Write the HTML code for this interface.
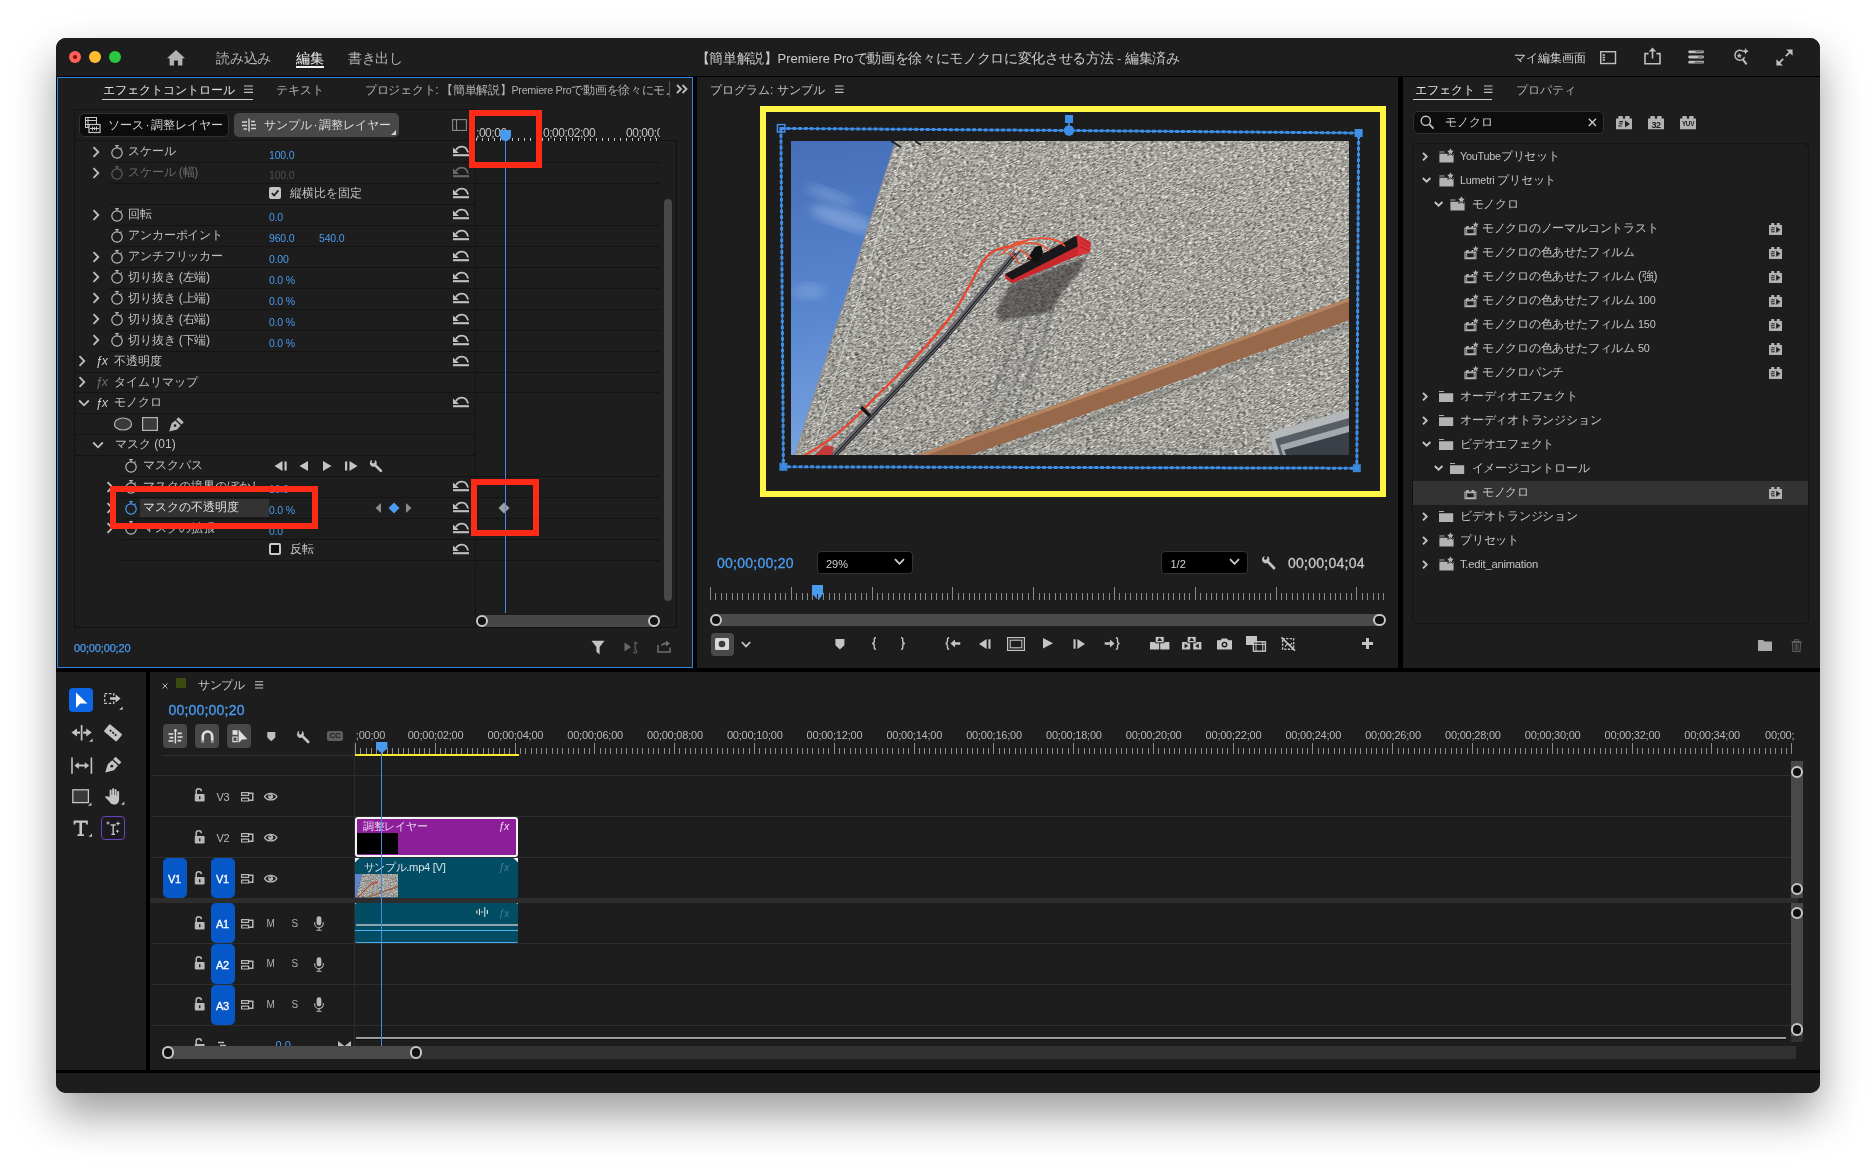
<!DOCTYPE html><html lang="ja"><head><meta charset="utf-8"><title>Premiere Pro</title><style>
*{box-sizing:border-box;margin:0;padding:0}
html,body{width:1876px;height:1167px;overflow:hidden;background:#fff;font-family:"Liberation Sans",sans-serif;font-size:12px;color:#c6c6c6}
#win{position:absolute;left:56px;top:38px;width:1764px;height:1055px;background:#000;border-radius:10px;overflow:hidden}
#shadow{position:absolute;left:56px;top:38px;width:1764px;height:1055px;border-radius:10px;box-shadow:0 22px 44px rgba(0,0,0,.39)}
#pg{position:absolute;left:-56px;top:-38px;width:1876px;height:1167px;will-change:transform}
.a{position:absolute}
.p{position:absolute;background:#1d1d1d}
.t{position:absolute;white-space:nowrap;line-height:16px;height:16px}
svg{position:absolute;overflow:visible}
</style></head><body>
<div id="shadow"></div><div id="win"><div id="pg">
<div class="p" style="left:56px;top:38px;width:1764px;height:38px"></div>
<div class="a" style="left:69px;top:51px;width:12px;height:12px;background:#fe5f57;border-radius:6px"></div>
<div class="a" style="left:89px;top:51px;width:12px;height:12px;background:#febc2e;border-radius:6px"></div>
<div class="a" style="left:109px;top:51px;width:12px;height:12px;background:#28c840;border-radius:6px"></div>
<div class="a" style="left:73px;top:55px;width:4px;height:4px;background:#7a0a05;border-radius:2px"></div>
<svg style="left:167px;top:50px;" width="18" height="16" viewBox="0 0 18 16"><path d="M9 0 L18 8.2 H15.4 V15.5 H11 V10.5 H7 V15.5 H2.6 V8.2 H0z" fill="#b2b2b2"/></svg>
<div class="t " style="left:216px;top:49.5px;font-size:14px;color:#b4b4b4;letter-spacing:-0.2px">読み込み</div>
<div class="t " style="left:296px;top:49.5px;font-size:14px;color:#ececec;">編集</div>
<div class="a" style="left:296px;top:66px;width:28px;height:2px;background:#f0f0f0;"></div>
<div class="t " style="left:348px;top:49.5px;font-size:14px;color:#b4b4b4;letter-spacing:-0.3px">書き出し</div>
<div class="t " style="left:695.5px;top:50.3px;font-size:14px;color:#cacaca;letter-spacing:-0.32px">【簡単解説】<span style="font-size:12.9px;letter-spacing:0">Premiere Pro</span>で動画を徐々にモノクロに変化させる方法<span style="font-size:12.9px;letter-spacing:0"> - </span>編集済み</div>
<div class="t " style="left:1514px;top:49.5px;font-size:12px;color:#d0d0d0;">マイ編集画面</div>
<div class="p" style="left:57px;top:77px;width:636px;height:591px;border:1px solid #2f86e3"></div>
<div class="p" style="left:697px;top:77px;width:701px;height:591px"></div>
<div class="p" style="left:1403px;top:77px;width:417px;height:591px"></div>
<div class="p" style="left:56px;top:672px;width:90px;height:398px"></div>
<div class="p" style="left:150px;top:672px;width:1670px;height:398px"></div>
<div class="p" style="left:56px;top:1073px;width:1764px;height:20px"></div>
<div class="t " style="left:103px;top:81.5px;font-size:12px;color:#e2e2e2;">エフェクトコントロール</div>
<svg style="left:244px;top:85px;" width="10" height="9" viewBox="0 0 10 9"><path d="M0 1H9M0 4.2H9M0 7.4H9" stroke="#c0c0c0" stroke-width="1.1"/></svg>
<div class="a" style="left:102px;top:98.8px;width:151px;height:1.5px;background:#d2d2d2;"></div>
<div class="t " style="left:276px;top:81.5px;font-size:12px;color:#b0b0b0;">テキスト</div>
<div class="t" style="left:365px;top:81.5px;font-size:12px;color:#b0b0b0;width:303.5px;overflow:hidden;letter-spacing:-0.3px">プロジェクト: 【簡単解説】<span style="font-size:10.8px">Premiere Pro</span>で動画を徐々にモノクロに</div>
<div class="a" style="left:669px;top:81px;width:1px;height:16px;background:#555;"></div>
<svg style="left:676px;top:84px;" width="12" height="10" viewBox="0 0 12 10"><path d="M1 1 L5 5 L1 9 M6.5 1 L10.5 5 L6.5 9" fill="none" stroke="#c0c0c0" stroke-width="1.8"/></svg>
<div class="a" style="left:74px;top:109px;width:603px;height:519px;border:1px solid #121212;border-top:none;border-right:none"></div>
<div class="a" style="left:74px;top:109px;width:402px;height:1px;background:#121212;"></div>
<div class="a" style="left:660px;top:140px;width:17px;height:1px;background:#121212;"></div>
<div class="a" style="left:676px;top:140px;width:1px;height:488px;background:#121212;"></div>
<div class="a" style="left:75px;top:140px;width:585px;height:1px;background:#131313;"></div>
<div class="a" style="left:79px;top:113px;width:150px;height:24px;background:#0c0c0c;border:1px solid #303030;border-radius:5px"></div>
<svg style="left:85px;top:117px;" width="16" height="16" viewBox="0 0 16 16"><rect x="0.5" y="0.5" width="11" height="10" fill="none" stroke="#c8c8c8" stroke-width="1"/><path d="M0.5 3.5h11M0.5 7.5h11M3 0.5v10" stroke="#c8c8c8" stroke-width="1"/><rect x="4" y="7.5" width="11" height="8" fill="#0c0c0c" stroke="#c8c8c8" stroke-width="1.2"/><path d="M5 11.5h9M7.5 9.5v4M9.5 10v3M11.5 9.5v4" stroke="#c8c8c8" stroke-width="1"/></svg>
<div class="t " style="left:108px;top:117px;font-size:12px;color:#d0d0d0;">ソース<span style="margin:0 1.6px 0 1.4px">·</span>調整レイヤー</div>
<div class="a" style="left:234px;top:113px;width:165px;height:24px;background:#484848;border-radius:5px"></div>
<svg style="left:242px;top:118px;" width="14" height="14" viewBox="0 0 14 14"><path d="M7 0.5v13" stroke="#d4d4d4" stroke-width="1.4"/><path d="M0 4h5M9 3.5h4M0 7.5h5M9 7h5M1.5 11h3.5M9 10.5h5" stroke="#d4d4d4" stroke-width="1.6"/></svg>
<div class="t " style="left:264px;top:117px;font-size:12px;color:#dadada;">サンプル<span style="margin:0 1.6px 0 1.4px">·</span>調整レイヤー</div>
<svg style="left:391px;top:130px;" width="5" height="5" viewBox="0 0 5 5"><path d="M5 0V5H0z" fill="#d0d0d0"/></svg>
<svg style="left:452px;top:119px;" width="15" height="12" viewBox="0 0 15 12"><rect x="0.6" y="0.6" width="13.8" height="10.8" fill="none" stroke="#8a8a8a" stroke-width="1.1"/><path d="M4.5 0.6v10.8" stroke="#8a8a8a" stroke-width="1.1"/></svg>
<div class="a" style="left:475px;top:110px;width:1px;height:518px;background:#131313;"></div>
<svg style="left:92px;top:145.9px;" width="8" height="12" viewBox="0 0 8 12"><path d="M1.5 1.2 L6.3 6 L1.5 10.8" fill="none" stroke="#c0c0c0" stroke-width="1.8"/></svg>
<svg style="left:109.5px;top:143.9px;" width="14" height="16" viewBox="0 0 14 16"><circle cx="7" cy="9" r="5.2" fill="none" stroke="#b8b8b8" stroke-width="1.2"/><path d="M5.2 1.6h3.6M7 1.6v2.2M10.6 4.6l1-1" stroke="#b8b8b8" stroke-width="1.3" fill="none"/></svg>
<div class="t " style="left:128.4px;top:143.4px;font-size:12px;color:#c2c2c2;letter-spacing:-0.2px">スケール</div>
<div class="t " style="left:269px;top:146.5px;font-size:10.5px;color:#4a9bef;letter-spacing:-0.2px">100.0</div>
<svg style="left:453px;top:145.4px;" width="16" height="12" viewBox="0 0 16 12"><path d="M3 5.2 C5 1.2 12.6 -1.2 15.1 7.4" fill="none" stroke="#c2c2c2" stroke-width="1.8"/><path d="M0 2.4 V8 H5.9z" fill="#c2c2c2"/><path d="M0 10.2 H16" stroke="#c2c2c2" stroke-width="2.1"/></svg>
<div class="a" style="left:109px;top:162px;width:551px;height:1px;background:#131313;"></div>
<svg style="left:92px;top:166.8px;" width="8" height="12" viewBox="0 0 8 12"><path d="M1.5 1.2 L6.3 6 L1.5 10.8" fill="none" stroke="#c0c0c0" stroke-width="1.8"/></svg>
<svg style="left:109.5px;top:164.8px;" width="14" height="16" viewBox="0 0 14 16"><circle cx="7" cy="9" r="5.2" fill="none" stroke="#5e5e5e" stroke-width="1.2"/><path d="M5.2 1.6h3.6M7 1.6v2.2M10.6 4.6l1-1" stroke="#5e5e5e" stroke-width="1.3" fill="none"/></svg>
<div class="t " style="left:128.4px;top:164.3px;font-size:12px;color:#6a6a6a;letter-spacing:-0.2px">スケール (幅)</div>
<div class="t " style="left:269px;top:167.4px;font-size:10.5px;color:#4e4e4e;letter-spacing:-0.2px">100.0</div>
<svg style="left:453px;top:166.3px;" width="16" height="12" viewBox="0 0 16 12"><path d="M3 5.2 C5 1.2 12.6 -1.2 15.1 7.4" fill="none" stroke="#6a6a6a" stroke-width="1.8"/><path d="M0 2.4 V8 H5.9z" fill="#6a6a6a"/><path d="M0 10.2 H16" stroke="#6a6a6a" stroke-width="2.1"/></svg>
<div class="a" style="left:109px;top:183px;width:551px;height:1px;background:#131313;"></div>
<div class="a" style="left:269px;top:187.2px;width:12px;height:12px;background:#c4c4c4;border-radius:2px"></div>
<svg style="left:270px;top:188.2px;" width="10" height="10" viewBox="0 0 10 10"><path d="M1.8 5.2 L4.2 7.6 L8.4 2.4" fill="none" stroke="#1a1a1a" stroke-width="1.7"/></svg>
<div class="t " style="left:290px;top:185.2px;font-size:12px;color:#c2c2c2;">縦横比を固定</div>
<svg style="left:453px;top:187.2px;" width="16" height="12" viewBox="0 0 16 12"><path d="M3 5.2 C5 1.2 12.6 -1.2 15.1 7.4" fill="none" stroke="#c2c2c2" stroke-width="1.8"/><path d="M0 2.4 V8 H5.9z" fill="#c2c2c2"/><path d="M0 10.2 H16" stroke="#c2c2c2" stroke-width="2.1"/></svg>
<div class="a" style="left:109px;top:204px;width:366px;height:1px;background:#131313;"></div>
<svg style="left:92px;top:208.6px;" width="8" height="12" viewBox="0 0 8 12"><path d="M1.5 1.2 L6.3 6 L1.5 10.8" fill="none" stroke="#c0c0c0" stroke-width="1.8"/></svg>
<svg style="left:109.5px;top:206.6px;" width="14" height="16" viewBox="0 0 14 16"><circle cx="7" cy="9" r="5.2" fill="none" stroke="#b8b8b8" stroke-width="1.2"/><path d="M5.2 1.6h3.6M7 1.6v2.2M10.6 4.6l1-1" stroke="#b8b8b8" stroke-width="1.3" fill="none"/></svg>
<div class="t " style="left:128.4px;top:206.1px;font-size:12px;color:#c2c2c2;letter-spacing:-0.2px">回転</div>
<div class="t " style="left:269px;top:209.2px;font-size:10.5px;color:#4a9bef;letter-spacing:-0.2px">0.0</div>
<svg style="left:453px;top:208.1px;" width="16" height="12" viewBox="0 0 16 12"><path d="M3 5.2 C5 1.2 12.6 -1.2 15.1 7.4" fill="none" stroke="#c2c2c2" stroke-width="1.8"/><path d="M0 2.4 V8 H5.9z" fill="#c2c2c2"/><path d="M0 10.2 H16" stroke="#c2c2c2" stroke-width="2.1"/></svg>
<div class="a" style="left:109px;top:225px;width:551px;height:1px;background:#131313;"></div>
<svg style="left:109.5px;top:227.5px;" width="14" height="16" viewBox="0 0 14 16"><circle cx="7" cy="9" r="5.2" fill="none" stroke="#b8b8b8" stroke-width="1.2"/><path d="M5.2 1.6h3.6M7 1.6v2.2M10.6 4.6l1-1" stroke="#b8b8b8" stroke-width="1.3" fill="none"/></svg>
<div class="t " style="left:128.4px;top:227.0px;font-size:12px;color:#c2c2c2;letter-spacing:-0.2px">アンカーポイント</div>
<div class="t " style="left:269px;top:230.1px;font-size:10.5px;color:#4a9bef;letter-spacing:-0.2px">960.0</div>
<div class="t " style="left:319px;top:230.1px;font-size:10.5px;color:#4a9bef;letter-spacing:-0.2px">540.0</div>
<svg style="left:453px;top:229.0px;" width="16" height="12" viewBox="0 0 16 12"><path d="M3 5.2 C5 1.2 12.6 -1.2 15.1 7.4" fill="none" stroke="#c2c2c2" stroke-width="1.8"/><path d="M0 2.4 V8 H5.9z" fill="#c2c2c2"/><path d="M0 10.2 H16" stroke="#c2c2c2" stroke-width="2.1"/></svg>
<div class="a" style="left:109px;top:246px;width:551px;height:1px;background:#131313;"></div>
<svg style="left:92px;top:250.5px;" width="8" height="12" viewBox="0 0 8 12"><path d="M1.5 1.2 L6.3 6 L1.5 10.8" fill="none" stroke="#c0c0c0" stroke-width="1.8"/></svg>
<svg style="left:109.5px;top:248.5px;" width="14" height="16" viewBox="0 0 14 16"><circle cx="7" cy="9" r="5.2" fill="none" stroke="#b8b8b8" stroke-width="1.2"/><path d="M5.2 1.6h3.6M7 1.6v2.2M10.6 4.6l1-1" stroke="#b8b8b8" stroke-width="1.3" fill="none"/></svg>
<div class="t " style="left:128.4px;top:248.0px;font-size:12px;color:#c2c2c2;letter-spacing:-0.2px">アンチフリッカー</div>
<div class="t " style="left:269px;top:251.10000000000002px;font-size:10.5px;color:#4a9bef;letter-spacing:-0.2px">0.00</div>
<svg style="left:453px;top:250.0px;" width="16" height="12" viewBox="0 0 16 12"><path d="M3 5.2 C5 1.2 12.6 -1.2 15.1 7.4" fill="none" stroke="#c2c2c2" stroke-width="1.8"/><path d="M0 2.4 V8 H5.9z" fill="#c2c2c2"/><path d="M0 10.2 H16" stroke="#c2c2c2" stroke-width="2.1"/></svg>
<div class="a" style="left:109px;top:267px;width:551px;height:1px;background:#131313;"></div>
<svg style="left:92px;top:271.4px;" width="8" height="12" viewBox="0 0 8 12"><path d="M1.5 1.2 L6.3 6 L1.5 10.8" fill="none" stroke="#c0c0c0" stroke-width="1.8"/></svg>
<svg style="left:109.5px;top:269.4px;" width="14" height="16" viewBox="0 0 14 16"><circle cx="7" cy="9" r="5.2" fill="none" stroke="#b8b8b8" stroke-width="1.2"/><path d="M5.2 1.6h3.6M7 1.6v2.2M10.6 4.6l1-1" stroke="#b8b8b8" stroke-width="1.3" fill="none"/></svg>
<div class="t " style="left:128.4px;top:268.9px;font-size:12px;color:#c2c2c2;letter-spacing:-0.2px">切り抜き (左端)</div>
<div class="t " style="left:269px;top:272.0px;font-size:10.5px;color:#4a9bef;letter-spacing:-0.2px">0.0 %</div>
<svg style="left:453px;top:270.9px;" width="16" height="12" viewBox="0 0 16 12"><path d="M3 5.2 C5 1.2 12.6 -1.2 15.1 7.4" fill="none" stroke="#c2c2c2" stroke-width="1.8"/><path d="M0 2.4 V8 H5.9z" fill="#c2c2c2"/><path d="M0 10.2 H16" stroke="#c2c2c2" stroke-width="2.1"/></svg>
<div class="a" style="left:109px;top:288px;width:551px;height:1px;background:#131313;"></div>
<svg style="left:92px;top:292.3px;" width="8" height="12" viewBox="0 0 8 12"><path d="M1.5 1.2 L6.3 6 L1.5 10.8" fill="none" stroke="#c0c0c0" stroke-width="1.8"/></svg>
<svg style="left:109.5px;top:290.3px;" width="14" height="16" viewBox="0 0 14 16"><circle cx="7" cy="9" r="5.2" fill="none" stroke="#b8b8b8" stroke-width="1.2"/><path d="M5.2 1.6h3.6M7 1.6v2.2M10.6 4.6l1-1" stroke="#b8b8b8" stroke-width="1.3" fill="none"/></svg>
<div class="t " style="left:128.4px;top:289.8px;font-size:12px;color:#c2c2c2;letter-spacing:-0.2px">切り抜き (上端)</div>
<div class="t " style="left:269px;top:292.90000000000003px;font-size:10.5px;color:#4a9bef;letter-spacing:-0.2px">0.0 %</div>
<svg style="left:453px;top:291.8px;" width="16" height="12" viewBox="0 0 16 12"><path d="M3 5.2 C5 1.2 12.6 -1.2 15.1 7.4" fill="none" stroke="#c2c2c2" stroke-width="1.8"/><path d="M0 2.4 V8 H5.9z" fill="#c2c2c2"/><path d="M0 10.2 H16" stroke="#c2c2c2" stroke-width="2.1"/></svg>
<div class="a" style="left:109px;top:309px;width:551px;height:1px;background:#131313;"></div>
<svg style="left:92px;top:313.2px;" width="8" height="12" viewBox="0 0 8 12"><path d="M1.5 1.2 L6.3 6 L1.5 10.8" fill="none" stroke="#c0c0c0" stroke-width="1.8"/></svg>
<svg style="left:109.5px;top:311.2px;" width="14" height="16" viewBox="0 0 14 16"><circle cx="7" cy="9" r="5.2" fill="none" stroke="#b8b8b8" stroke-width="1.2"/><path d="M5.2 1.6h3.6M7 1.6v2.2M10.6 4.6l1-1" stroke="#b8b8b8" stroke-width="1.3" fill="none"/></svg>
<div class="t " style="left:128.4px;top:310.7px;font-size:12px;color:#c2c2c2;letter-spacing:-0.2px">切り抜き (右端)</div>
<div class="t " style="left:269px;top:313.8px;font-size:10.5px;color:#4a9bef;letter-spacing:-0.2px">0.0 %</div>
<svg style="left:453px;top:312.7px;" width="16" height="12" viewBox="0 0 16 12"><path d="M3 5.2 C5 1.2 12.6 -1.2 15.1 7.4" fill="none" stroke="#c2c2c2" stroke-width="1.8"/><path d="M0 2.4 V8 H5.9z" fill="#c2c2c2"/><path d="M0 10.2 H16" stroke="#c2c2c2" stroke-width="2.1"/></svg>
<div class="a" style="left:109px;top:330px;width:551px;height:1px;background:#131313;"></div>
<svg style="left:92px;top:334.1px;" width="8" height="12" viewBox="0 0 8 12"><path d="M1.5 1.2 L6.3 6 L1.5 10.8" fill="none" stroke="#c0c0c0" stroke-width="1.8"/></svg>
<svg style="left:109.5px;top:332.1px;" width="14" height="16" viewBox="0 0 14 16"><circle cx="7" cy="9" r="5.2" fill="none" stroke="#b8b8b8" stroke-width="1.2"/><path d="M5.2 1.6h3.6M7 1.6v2.2M10.6 4.6l1-1" stroke="#b8b8b8" stroke-width="1.3" fill="none"/></svg>
<div class="t " style="left:128.4px;top:331.6px;font-size:12px;color:#c2c2c2;letter-spacing:-0.2px">切り抜き (下端)</div>
<div class="t " style="left:269px;top:334.70000000000005px;font-size:10.5px;color:#4a9bef;letter-spacing:-0.2px">0.0 %</div>
<svg style="left:453px;top:333.6px;" width="16" height="12" viewBox="0 0 16 12"><path d="M3 5.2 C5 1.2 12.6 -1.2 15.1 7.4" fill="none" stroke="#c2c2c2" stroke-width="1.8"/><path d="M0 2.4 V8 H5.9z" fill="#c2c2c2"/><path d="M0 10.2 H16" stroke="#c2c2c2" stroke-width="2.1"/></svg>
<div class="a" style="left:109px;top:351px;width:551px;height:1px;background:#131313;"></div>
<svg style="left:78px;top:355.1px;" width="8" height="12" viewBox="0 0 8 12"><path d="M1.5 1.2 L6.3 6 L1.5 10.8" fill="none" stroke="#c0c0c0" stroke-width="1.8"/></svg>
<div class="t " style="left:95.5px;top:353.1px;font-size:12.5px;color:#c8c8c8;font-style:italic;letter-spacing:-0.6px">ƒx</div>
<div class="t " style="left:114px;top:352.6px;font-size:12px;color:#c2c2c2;">不透明度</div>
<svg style="left:453px;top:354.6px;" width="16" height="12" viewBox="0 0 16 12"><path d="M3 5.2 C5 1.2 12.6 -1.2 15.1 7.4" fill="none" stroke="#c0c0c0" stroke-width="1.8"/><path d="M0 2.4 V8 H5.9z" fill="#c0c0c0"/><path d="M0 10.2 H16" stroke="#c0c0c0" stroke-width="2.1"/></svg>
<div class="a" style="left:75px;top:372px;width:585px;height:1px;background:#131313;"></div>
<svg style="left:78px;top:376.0px;" width="8" height="12" viewBox="0 0 8 12"><path d="M1.5 1.2 L6.3 6 L1.5 10.8" fill="none" stroke="#c0c0c0" stroke-width="1.8"/></svg>
<div class="t " style="left:95.5px;top:374.0px;font-size:12.5px;color:#6c6c6c;font-style:italic;letter-spacing:-0.6px">ƒx</div>
<div class="t " style="left:114px;top:373.5px;font-size:12px;color:#c2c2c2;">タイムリマップ</div>
<div class="a" style="left:75px;top:392px;width:585px;height:1px;background:#131313;"></div>
<svg style="left:78px;top:398.9px;" width="12" height="8" viewBox="0 0 12 8"><path d="M1.2 1.5 L6 6.3 L10.8 1.5" fill="none" stroke="#c0c0c0" stroke-width="1.8"/></svg>
<div class="t " style="left:95.5px;top:394.9px;font-size:12.5px;color:#c8c8c8;font-style:italic;letter-spacing:-0.6px">ƒx</div>
<div class="t " style="left:114px;top:394.4px;font-size:12px;color:#c2c2c2;">モノクロ</div>
<svg style="left:453px;top:396.4px;" width="16" height="12" viewBox="0 0 16 12"><path d="M3 5.2 C5 1.2 12.6 -1.2 15.1 7.4" fill="none" stroke="#c0c0c0" stroke-width="1.8"/><path d="M0 2.4 V8 H5.9z" fill="#c0c0c0"/><path d="M0 10.2 H16" stroke="#c0c0c0" stroke-width="2.1"/></svg>
<div class="a" style="left:75px;top:413px;width:400px;height:1px;background:#131313;"></div>
<svg style="left:113px;top:416.8px;" width="20" height="14" viewBox="0 0 20 14"><ellipse cx="10" cy="7" rx="8.6" ry="6" fill="#3a3a3a" stroke="#b4b4b4" stroke-width="1.2"/></svg>
<svg style="left:142px;top:416.8px;" width="16" height="14" viewBox="0 0 16 14"><rect x="0.6" y="0.6" width="14.8" height="12.8" fill="#3a3a3a" stroke="#b4b4b4" stroke-width="1.2"/></svg>
<svg style="left:168px;top:415.8px;" width="17" height="16" viewBox="0 0 17 16"><path d="M10.5 1.2 L15.8 6.2 L13.6 8.4 L8.2 3.4z M7.4 4.4 L12.6 9.4 L9.2 13.4 L1.2 15.4 L3.6 7.6z" fill="#b8b8b8"/><circle cx="7" cy="9.6" r="1.3" fill="#1d1d1d"/></svg>
<div class="a" style="left:75px;top:434px;width:400px;height:1px;background:#131313;"></div>
<svg style="left:92px;top:440.7px;" width="12" height="8" viewBox="0 0 12 8"><path d="M1.2 1.5 L6 6.3 L10.8 1.5" fill="none" stroke="#c0c0c0" stroke-width="1.8"/></svg>
<div class="t " style="left:115px;top:436.2px;font-size:12px;color:#c2c2c2;">マスク (01)</div>
<div class="a" style="left:75px;top:455px;width:400px;height:1px;background:#131313;"></div>
<svg style="left:123.5px;top:457.7px;" width="14" height="16" viewBox="0 0 14 16"><circle cx="7" cy="9" r="5.2" fill="none" stroke="#b8b8b8" stroke-width="1.2"/><path d="M5.2 1.6h3.6M7 1.6v2.2M10.6 4.6l1-1" stroke="#b8b8b8" stroke-width="1.3" fill="none"/></svg>
<div class="t " style="left:143px;top:457.2px;font-size:12px;color:#c2c2c2;">マスクパス</div>
<svg style="left:274px;top:460.7px;" width="14" height="10" viewBox="0 0 14 10"><path d="M8.5 0 V10 L0.5 5z" fill="#c4c4c4"/><path d="M10.5 0.5h2.2v9h-2.2z" fill="#c4c4c4"/></svg>
<svg style="left:299px;top:460.7px;" width="9" height="10" viewBox="0 0 9 10"><path d="M9 0 V10 L0.5 5z" fill="#c4c4c4"/></svg>
<svg style="left:323px;top:460.7px;" width="9" height="10" viewBox="0 0 9 10"><path d="M0 0 V10 L8.5 5z" fill="#c4c4c4"/></svg>
<svg style="left:344px;top:460.7px;" width="14" height="10" viewBox="0 0 14 10"><path d="M1 0.5h2.2v9H1z" fill="#c4c4c4"/><path d="M5.5 0 V10 L13.5 5z" fill="#c4c4c4"/></svg>
<svg style="left:369px;top:458.7px;" width="14" height="14" viewBox="0 0 14 14"><path d="M3.2 0.8 a3.6 3.6 0 0 0 -2 5 a3.6 3.6 0 0 0 4.4 1.6 L11 12.8 a1.3 1.3 0 0 0 1.9 -1.9 L7.4 5.4 a3.6 3.6 0 0 0 -1.6 -4.4 L5.8 3.4 L4 4.6 L2.6 3.6z" fill="#c4c4c4"/></svg>
<div class="a" style="left:122px;top:476px;width:538px;height:1px;background:#131313;"></div>
<svg style="left:106px;top:480.6px;" width="8" height="12" viewBox="0 0 8 12"><path d="M1.5 1.2 L6.3 6 L1.5 10.8" fill="none" stroke="#c0c0c0" stroke-width="1.8"/></svg>
<svg style="left:123.5px;top:478.6px;" width="14" height="16" viewBox="0 0 14 16"><circle cx="7" cy="9" r="5.2" fill="none" stroke="#b8b8b8" stroke-width="1.2"/><path d="M5.2 1.6h3.6M7 1.6v2.2M10.6 4.6l1-1" stroke="#b8b8b8" stroke-width="1.3" fill="none"/></svg>
<div class="t " style="left:143px;top:478.1px;font-size:12px;color:#c2c2c2;">マスクの境界のぼかし</div>
<div class="t " style="left:269px;top:481.20000000000005px;font-size:10.5px;color:#4a9bef;letter-spacing:-0.2px">10.0</div>
<svg style="left:453px;top:480.1px;" width="16" height="12" viewBox="0 0 16 12"><path d="M3 5.2 C5 1.2 12.6 -1.2 15.1 7.4" fill="none" stroke="#c0c0c0" stroke-width="1.8"/><path d="M0 2.4 V8 H5.9z" fill="#c0c0c0"/><path d="M0 10.2 H16" stroke="#c0c0c0" stroke-width="2.1"/></svg>
<div class="a" style="left:122px;top:497px;width:538px;height:1px;background:#131313;"></div>
<svg style="left:106px;top:501.5px;" width="8" height="12" viewBox="0 0 8 12"><path d="M1.5 1.2 L6.3 6 L1.5 10.8" fill="none" stroke="#c0c0c0" stroke-width="1.8"/></svg>
<svg style="left:123.5px;top:499.5px;" width="14" height="16" viewBox="0 0 14 16"><circle cx="7" cy="9" r="5.2" fill="none" stroke="#4a9bef" stroke-width="1.2"/><path d="M5.2 1.6h3.6M7 1.6v2.2M10.6 4.6l1-1" stroke="#4a9bef" stroke-width="1.3" fill="none"/></svg>
<div class="a" style="left:140px;top:498.5px;width:129px;height:18px;background:#333333;"></div>
<div class="t " style="left:143px;top:499.0px;font-size:12px;color:#dedede;">マスクの不透明度</div>
<div class="t " style="left:269px;top:502.1px;font-size:10.5px;color:#4a9bef;letter-spacing:-0.2px">0.0 %</div>
<svg style="left:453px;top:501.0px;" width="16" height="12" viewBox="0 0 16 12"><path d="M3 5.2 C5 1.2 12.6 -1.2 15.1 7.4" fill="none" stroke="#c0c0c0" stroke-width="1.8"/><path d="M0 2.4 V8 H5.9z" fill="#c0c0c0"/><path d="M0 10.2 H16" stroke="#c0c0c0" stroke-width="2.1"/></svg>
<div class="a" style="left:122px;top:518px;width:538px;height:1px;background:#131313;"></div>
<svg style="left:375px;top:502.5px;" width="6" height="10" viewBox="0 0 6 10"><path d="M6 0V10L0.5 5z" fill="#8c8c8c"/></svg>
<svg style="left:388px;top:501.5px;" width="12" height="12" viewBox="0 0 12 12"><path d="M6 0.5 L11.5 6 L6 11.5 L0.5 6z" fill="#4a9bef"/></svg>
<svg style="left:406px;top:502.5px;" width="6" height="10" viewBox="0 0 6 10"><path d="M0 0V10L5.5 5z" fill="#8c8c8c"/></svg>
<svg style="left:498px;top:501.5px;" width="12" height="12" viewBox="0 0 12 12"><path d="M6 0.5 L11.5 6 L6 11.5 L0.5 6z" fill="#a0a0a0"/></svg>
<svg style="left:106px;top:522.4px;" width="8" height="12" viewBox="0 0 8 12"><path d="M1.5 1.2 L6.3 6 L1.5 10.8" fill="none" stroke="#c0c0c0" stroke-width="1.8"/></svg>
<svg style="left:123.5px;top:520.4px;" width="14" height="16" viewBox="0 0 14 16"><circle cx="7" cy="9" r="5.2" fill="none" stroke="#b8b8b8" stroke-width="1.2"/><path d="M5.2 1.6h3.6M7 1.6v2.2M10.6 4.6l1-1" stroke="#b8b8b8" stroke-width="1.3" fill="none"/></svg>
<div class="t " style="left:143px;top:519.9px;font-size:12px;color:#c2c2c2;">マスクの拡張</div>
<div class="t " style="left:269px;top:523.0px;font-size:10.5px;color:#4a9bef;letter-spacing:-0.2px">0.0</div>
<svg style="left:453px;top:521.9px;" width="16" height="12" viewBox="0 0 16 12"><path d="M3 5.2 C5 1.2 12.6 -1.2 15.1 7.4" fill="none" stroke="#c0c0c0" stroke-width="1.8"/><path d="M0 2.4 V8 H5.9z" fill="#c0c0c0"/><path d="M0 10.2 H16" stroke="#c0c0c0" stroke-width="2.1"/></svg>
<div class="a" style="left:122px;top:539px;width:538px;height:1px;background:#131313;"></div>
<div class="a" style="left:269px;top:543.3px;width:12px;height:12px;border:2px solid #c8c8c8;border-radius:2px;background:#0c0c0c"></div>
<div class="t " style="left:290px;top:540.8px;font-size:12px;color:#c2c2c2;">反転</div>
<svg style="left:453px;top:542.8px;" width="16" height="12" viewBox="0 0 16 12"><path d="M3 5.2 C5 1.2 12.6 -1.2 15.1 7.4" fill="none" stroke="#c0c0c0" stroke-width="1.8"/><path d="M0 2.4 V8 H5.9z" fill="#c0c0c0"/><path d="M0 10.2 H16" stroke="#c0c0c0" stroke-width="2.1"/></svg>
<div class="a" style="left:122px;top:560px;width:538px;height:1px;background:#131313;"></div>
<div class="t " style="left:476px;top:124.80000000000001px;font-size:12px;color:#c4c4c4;letter-spacing:-0.45px">;00;00</div>
<div class="t " style="left:543px;top:124.80000000000001px;font-size:12px;color:#c4c4c4;letter-spacing:-0.45px">0;00;02;00</div>
<div class="t " style="left:626px;top:124.80000000000001px;font-size:12px;color:#c4c4c4;letter-spacing:-0.45px;width:34px;overflow:hidden">00;00;0</div>
<div class="a" style="left:475.5px;top:138px;width:184.5px;height:3px;background:repeating-linear-gradient(90deg,#c8c8c8 0 1.2px,transparent 1.2px 6px)"></div>
<div class="a" style="left:505px;top:139px;width:1.3px;height:474px;background:#3f8ee6;"></div>
<svg style="left:500px;top:130px;" width="11" height="11" viewBox="0 0 11 11"><path d="M0 0 H11 V5.5 A5.5 5.5 0 0 1 0 5.5z" fill="#4a9bef"/></svg>
<div class="a" style="left:664px;top:198.7px;width:8px;height:402px;background:#484848;border-radius:4px"></div>
<div class="a" style="left:476px;top:615px;width:184px;height:12px;background:#474747;border-radius:6px"></div>
<div class="a" style="left:476px;top:615px;width:12px;height:12px;border-radius:6px;border:2px solid #c6c6c6;background:#121212"></div>
<div class="a" style="left:648px;top:615px;width:12px;height:12px;border-radius:6px;border:2px solid #c6c6c6;background:#121212"></div>
<div class="t " style="left:74px;top:640px;font-size:11px;color:#4a9bef;letter-spacing:-0.15px;-webkit-text-stroke:0.25px #4a9bef">00;00;00;20</div>
<svg style="left:591px;top:640px;" width="14" height="15" viewBox="0 0 14 15"><path d="M0.5 0.8 H13.5 L8.6 7 V14.5 L5.4 11.8 V7z" fill="#c4c4c4"/></svg>
<svg style="left:624px;top:641px;" width="15" height="12" viewBox="0 0 15 12"><path d="M0.5 1.5 V10.5 L7 6z" fill="#666"/><path d="M9.5 10.5 a1.6 1.6 0 1 0 1.6-1.6 V1.2 l2.6 1.2" fill="none" stroke="#666" stroke-width="1.1"/></svg>
<svg style="left:657px;top:641px;" width="14" height="12" viewBox="0 0 14 12"><path d="M1 4 V11 H13 V6.5" fill="none" stroke="#6e6e6e" stroke-width="1.5"/><path d="M4 5.5 c0-3 2.5-4 5-4 V-0.6 L13 2.6 L9 5.6 V3.6 c-2 0-3.6 0.4-5 1.9z" fill="#6e6e6e"/></svg>
<div class="a" style="left:469px;top:110px;width:73px;height:58px;border:6px solid #fd2a18"></div>
<div class="a" style="left:110px;top:486px;width:208px;height:43px;border:6px solid #fd2a18"></div>
<div class="a" style="left:471px;top:479px;width:68px;height:57px;border:6px solid #fd2a18"></div>
<div class="t " style="left:710px;top:81.5px;font-size:12px;color:#c2c2c2;">プログラム: サンプル</div>
<svg style="left:835px;top:85px;" width="10" height="9" viewBox="0 0 10 9"><path d="M0 1H8.5M0 4.2H8.5M0 7.4H8.5" stroke="#c0c0c0" stroke-width="1.1"/></svg>
<div class="a" style="left:759.7px;top:106px;width:626px;height:390.5px;border:6.5px solid #fff545"></div>
<svg style="left:791px;top:141px;" width="558" height="314" viewBox="0 0 558 314">
<defs>
<linearGradient id="sky" x1="0" y1="0" x2="0.25" y2="1"><stop offset="0" stop-color="#456fb8"/><stop offset="0.55" stop-color="#5a88d0"/><stop offset="1" stop-color="#7ca6e2"/></linearGradient>
<linearGradient id="wall" x1="0" y1="1" x2="1" y2="0"><stop offset="0" stop-color="#969590"/><stop offset="0.5" stop-color="#9f9e99"/><stop offset="1" stop-color="#a6a5a0"/></linearGradient>
<filter id="stucco" x="0" y="0" width="100%" height="100%" color-interpolation-filters="sRGB">
<feTurbulence type="fractalNoise" baseFrequency="0.3 1.15" numOctaves="3" seed="11" result="t"/>
<feColorMatrix in="t" type="matrix" values="1.3 0 0 0 -0.15  1.3 0 0 0 -0.15  1.3 0 0 0 -0.15  0 0 0 0 1" result="n"/>
<feComposite in="SourceGraphic" in2="n" operator="arithmetic" k1="0" k2="1" k3="0.86" k4="-0.42" result="c"/>
<feComposite in="c" in2="SourceGraphic" operator="in"/>
</filter>
<filter id="bl"><feGaussianBlur stdDeviation="1.6"/></filter>
<filter id="bl2"><feGaussianBlur stdDeviation="5"/></filter>
<clipPath id="cp"><rect x="0" y="0" width="558" height="314"/></clipPath>
<clipPath id="wallcp"><path d="M104.7 0 H558 V314 H3.9z"/></clipPath>
</defs>
<g clip-path="url(#cp)">
<rect width="558" height="314" fill="url(#sky)"/>
<ellipse cx="52" cy="78" rx="34" ry="9" fill="#a9c4ec" opacity="0.45" filter="url(#bl2)" transform="rotate(18 52 78)"/>
<ellipse cx="40" cy="55" rx="26" ry="6" fill="#a9c4ec" opacity="0.35" filter="url(#bl2)" transform="rotate(20 40 55)"/>
<ellipse cx="18" cy="150" rx="16" ry="8" fill="#a9c4ec" opacity="0.3" filter="url(#bl2)"/>
<g clip-path="url(#wallcp)">
<rect x="-90" y="-160" width="740" height="640" fill="url(#wall)" filter="url(#stucco)" transform="rotate(-24 279 157)"/>
<path d="M219.6 143 L294.9 115.5 L290.1 129.2 L269.3 153.2 L259.6 170.9 L208.4 180.5 L205.2 169.3z" fill="#343331" opacity="0.6" filter="url(#bl)"/>
<path d="M240 160 L222 205 L176 314 M254 156 L238 205 L192 314 M266 152 L252 200 L214 300" stroke="#4a4947" stroke-width="2" fill="none" opacity="0.6" filter="url(#bl)"/>
<path d="M189 318 L558 184.5" stroke="#6e6d69" stroke-width="4" opacity="0.45" filter="url(#bl)"/>
</g>
<path d="M115.3 0 L20.4 314" stroke="#d2d2cc" stroke-width="1" opacity="0.85"/>
<path d="M104.7 0 L3.9 314" stroke="#8f8e89" stroke-width="1.2" opacity="0.7"/>
<path d="M126.7 314 L558 157 V179.3 L179.6 314z" fill="#98684a"/>
<path d="M126.7 314 L558 157 V160.5 L136 314z" fill="#b58561"/>
<path d="M477.6 292 L558 268.5 V314 H484z" fill="#b4b8bb"/>
<path d="M484 298 L558 277 V314 H489z" fill="#585e66"/>
<path d="M489 304 L558 284.5 V314 H492z" fill="#a4a9ae"/>
<path d="M493 309 L558 291 V314 H495z" fill="#3a4048"/>
<path d="M41.5 316 L154 196.5 L227.6 108.4" stroke="#2a2a2e" stroke-width="5.6" fill="none" stroke-linejoin="round"/>
<path d="M40.4 314.8 L152.9 195.3 L226.5 107.2" stroke="#6a6a72" stroke-width="2" fill="none"/>
<path d="M42.6 316.6 L155 197.4 L228.6 109.4" stroke="#8e8e96" stroke-width="0.8" fill="none"/>
<path d="M24 314 l10 -10 l9 2 l-2 8z" fill="#c23a3a"/>
<path d="M11 316 C40 300 58 284 72 269 C92 248 106 236 121 220 C140 200 153 186 165 168 C178 148 186 128 194 118 C200 110 210 106 221.2 105.2" stroke="#ea452f" stroke-width="2.3" fill="none"/>
<path d="M70 266 l9 9" stroke="#151515" stroke-width="3.4"/>
<path d="M176 152 l3 3" stroke="#e6e6ea" stroke-width="2"/>
<path d="M214 133.2 L285.3 94.7 L286.9 93.9 L299.7 101.1 L298.9 111.6 L286.9 114.8 L221.2 142.4 L214 137z" fill="#c9282c"/>
<path d="M214 133.2 L285.3 94.7 L286.9 105.2 L221.2 138.8z" fill="#19191b"/>
<path d="M286.9 93.9 L299.7 101.1 L298.9 111.6 L286.9 114.8z" fill="#d8343a"/>
<path d="M289 97 L298 102.6 M289 101 L298.5 106.4 M289 105.5 L298.5 110" stroke="#a81e22" stroke-width="0.9"/>
<path d="M236 118 L244 106 L250 104 L252 112 L246 122z" fill="#111"/>
<path d="M221.2 106.8 C230 97 262 92 274.1 105.2" stroke="#f4502c" stroke-width="1.7" fill="none"/>
<path d="M211.6 113.2 C216 106 224 102 230.8 100.3" stroke="#f4502c" stroke-width="1.7" fill="none"/>
<path d="M226 104 C238 100 252 102 258 110 M222 108 C230 108 236 112 240 118 M218 112 C222 114 226 118 228 123" stroke="#f4502c" stroke-width="1.5" fill="none"/>
<path d="M224 111.5 L229 106.5" stroke="#c8c8cc" stroke-width="2.6"/>
<path d="M100 0 l10 6 M124 0 l6 4" stroke="#222" stroke-width="2"/>
<circle cx="104" cy="14" r="1.8" fill="#ddd"/>
</g>
</svg>
<svg style="left:0px;top:0px;" width="1876" height="1167" viewBox="0 0 1876 1167"><path d="M780.9 128.4 L1069 130.5 L1358.6 133 L1356.8 468.2 L783.4 466.8z" fill="none" stroke="#3f8fe8" stroke-width="1.3"/><path d="M780.9 128.4 L1069 130.5 L1358.6 133 L1356.8 468.2 L783.4 466.8z" fill="none" stroke="#3f8fe8" stroke-width="3" stroke-dasharray="3.6 2.2"/>
<path d="M1069 130 V121" stroke="#3f8fe8" stroke-width="1.5"/>
<rect x="1065" y="115" width="8" height="8" fill="#3f8fe8"/>
<circle cx="1069" cy="130.5" r="5.2" fill="#3f8fe8"/>
<rect x="777.4" y="124.6" width="7.4" height="7.4" fill="none" stroke="#3f8fe8" stroke-width="1.5"/>
<rect x="1354.6" y="129" width="8" height="8" fill="#3f8fe8"/>
<rect x="1352.8" y="464.2" width="8" height="8" fill="#3f8fe8" opacity="0.9"/>
<rect x="779.4" y="462.8" width="8" height="8" fill="#3f8fe8" opacity="0.9"/></svg>
<div class="t " style="left:717px;top:554.5px;font-size:14px;color:#4a9bef;letter-spacing:0.25px;-webkit-text-stroke:0.35px #4a9bef">00;00;00;20</div>
<div class="a" style="left:817px;top:550.5px;width:95.5px;height:23px;background:#000;border:1px solid #343434;border-radius:4px"></div>
<div class="t " style="left:826px;top:555.5px;font-size:11px;color:#d0d0d0;">29%</div>
<svg style="left:894px;top:558px;" width="11" height="8" viewBox="0 0 11 8"><path d="M1 1.2 L5.5 5.8 L10 1.2" fill="none" stroke="#d4d4d4" stroke-width="1.7"/></svg>
<div class="a" style="left:1161px;top:551px;width:86.5px;height:22.5px;background:#000;border:1px solid #343434;border-radius:4px"></div>
<div class="t " style="left:1170.5px;top:555.5px;font-size:11px;color:#d0d0d0;">1/2</div>
<svg style="left:1229px;top:558px;" width="11" height="8" viewBox="0 0 11 8"><path d="M1 1.2 L5.5 5.8 L10 1.2" fill="none" stroke="#d4d4d4" stroke-width="1.7"/></svg>
<svg style="left:1261px;top:555px;" width="15" height="15" viewBox="0 0 15 15"><path d="M3.6 0.9 a3.9 3.9 0 0 0 -2.2 5.4 a3.9 3.9 0 0 0 4.8 1.8 L12 13.9 a1.4 1.4 0 0 0 2 -2 L8.1 5.9 a3.9 3.9 0 0 0 -1.8 -4.8 L6.3 3.7 L4.4 5 L2.9 3.9z" fill="#c4c4c4"/></svg>
<div class="t " style="left:1288px;top:554.5px;font-size:14px;color:#c8c8c8;letter-spacing:0.25px;-webkit-text-stroke:0.3px #c8c8c8">00;00;04;04</div>
<div class="a" style="left:710px;top:593px;width:675px;height:6.5px;background:repeating-linear-gradient(90deg,#8a8a8a 0 1px,transparent 1px 5.387px)"></div>
<div class="a" style="left:710px;top:587px;width:675px;height:6.5px;background:repeating-linear-gradient(90deg,#8a8a8a 0 1px,transparent 1px 80.8px)"></div>
<svg style="left:812px;top:585px;" width="12" height="15" viewBox="0 0 12 15"><path d="M0 0 H11 V8.5 L7.5 14 H4.8 L0 8.5z" fill="#4a9bef"/><path d="M5.5 9v5" stroke="#1d1d1d" stroke-width="1"/></svg>
<div class="a" style="left:710px;top:613.5px;width:675px;height:12.5px;background:#4a4a4a;border-radius:6px"></div>
<div class="a" style="left:709.8px;top:613.5px;width:12.4px;height:12.4px;border-radius:6.2px;border:2px solid #c6c6c6;background:#101010"></div>
<div class="a" style="left:1373.3px;top:613.5px;width:12.4px;height:12.4px;border-radius:6.2px;border:2px solid #c6c6c6;background:#101010"></div>
<div class="a" style="left:710.5px;top:632.5px;width:23.5px;height:23.5px;background:#4a4a4a;border-radius:4px"></div>
<svg style="left:715px;top:638px;" width="14" height="12" viewBox="0 0 14 12"><rect x="0" y="0" width="14" height="12" rx="1.5" fill="#d8d8d8"/><circle cx="7" cy="6" r="3.3" fill="#3a3a3a"/></svg>
<svg style="left:741px;top:640.5px;" width="10" height="7" viewBox="0 0 10 7"><path d="M0.8 1 L5 5.4 L9.2 1" fill="none" stroke="#c8c8c8" stroke-width="1.7"/></svg>
<svg style="left:834.5px;top:639px;" width="10" height="11" viewBox="0 0 10 11"><path d="M0.4 0 H9.4 V6.2 L4.9 10.4 L0.4 6.2z" fill="#c4c4c4"/></svg>
<svg style="left:870.5px;top:637px;" width="6" height="13" viewBox="0 0 6 13"><path d="M5 0.7 C2.8 0.7 3.3 2.6 3.3 4.2 C3.3 5.6 2.6 6.3 1.2 6.5 C2.6 6.7 3.3 7.4 3.3 8.8 C3.3 10.4 2.8 12.3 5 12.3" fill="none" stroke="#c4c4c4" stroke-width="1.4"/></svg>
<svg style="left:899.5px;top:637px;" width="6" height="13" viewBox="0 0 6 13"><path d="M1 0.7 C3.2 0.7 2.7 2.6 2.7 4.2 C2.7 5.6 3.4 6.3 4.8 6.5 C3.4 6.7 2.7 7.4 2.7 8.8 C2.7 10.4 3.2 12.3 1 12.3" fill="none" stroke="#c4c4c4" stroke-width="1.4"/></svg>
<svg style="left:945px;top:637px;" width="16" height="13" viewBox="0 0 16 13"><path d="M4.2 0.7 C2 0.7 2.5 2.6 2.5 4.2 C2.5 5.6 1.8 6.3 0.6 6.5 C1.8 6.7 2.5 7.4 2.5 8.8 C2.5 10.4 2 12.3 4.2 12.3" fill="none" stroke="#c4c4c4" stroke-width="1.4"/><path d="M5.5 6.5 L10 2.6 V5.3 H15.3 V7.7 H10 V10.4z" fill="#c4c4c4"/></svg>
<svg style="left:978.5px;top:638.5px;" width="12" height="10" viewBox="0 0 12 10"><path d="M7.6 0 V10 L0 5z" fill="#c4c4c4"/><path d="M9.4 0.3h2.1v9.4H9.4z" fill="#c4c4c4"/></svg>
<svg style="left:1007px;top:637px;" width="18" height="14" viewBox="0 0 18 14"><rect x="0.6" y="0.6" width="16.8" height="12.8" fill="none" stroke="#c4c4c4" stroke-width="1.2"/><rect x="3.2" y="3.2" width="11.6" height="7.6" fill="none" stroke="#c4c4c4" stroke-width="1.1"/></svg>
<svg style="left:1042.5px;top:638.3px;" width="10" height="10.4" viewBox="0 0 10 10.4"><path d="M0 0 V10.4 L10 5.2z" fill="#c4c4c4"/></svg>
<svg style="left:1073px;top:638.5px;" width="12" height="10" viewBox="0 0 12 10"><path d="M0.5 0.3h2.1v9.4H0.5z" fill="#c4c4c4"/><path d="M4.4 0 V10 L12 5z" fill="#c4c4c4"/></svg>
<svg style="left:1104px;top:637px;" width="16" height="13" viewBox="0 0 16 13"><path d="M11.8 0.7 C14 0.7 13.5 2.6 13.5 4.2 C13.5 5.6 14.2 6.3 15.4 6.5 C14.2 6.7 13.5 7.4 13.5 8.8 C13.5 10.4 14 12.3 11.8 12.3" fill="none" stroke="#c4c4c4" stroke-width="1.4"/><path d="M10.5 6.5 L6 2.6 V5.3 H0.7 V7.7 H6 V10.4z" fill="#c4c4c4"/></svg>
<svg style="left:1149.8px;top:636px;" width="19.4" height="14" viewBox="0 0 19.4 14"><path d="M0 6h9.2v7.6H0z M10.2 6h9.2v7.6h-9.2z" fill="#c4c4c4"/><path d="M5.2 0.4h9v6.4h-9z" fill="#c4c4c4" stroke="#1d1d1d" stroke-width="0.9"/><path d="M9.7 1.6 l2.5 3.4h-5z" fill="#1d1d1d"/></svg>
<svg style="left:1182px;top:636px;" width="19.4" height="14" viewBox="0 0 19.4 14"><path d="M0 6h8.2v7.6H0z M11.2 6h8.2v7.6h-8.2z" fill="#c4c4c4"/><path d="M2.6 7.6 L6.2 9.9 L2.6 12.2z M16.8 7.6 L13.2 9.9 L16.8 12.2z" fill="#1d1d1d"/><path d="M5.2 0.4h9v6.4h-9z" fill="#c4c4c4" stroke="#1d1d1d" stroke-width="0.9"/><path d="M9.7 1.6 l2.5 3.4h-5z" fill="#1d1d1d"/></svg>
<svg style="left:1216.5px;top:638px;" width="15" height="12" viewBox="0 0 15 12"><path d="M0 2.2 H3.6 L5 0.4 H10 L11.4 2.2 H15 V11.6 H0z" fill="#c4c4c4"/><circle cx="7.5" cy="6.6" r="2.9" fill="#1d1d1d"/><circle cx="7.5" cy="6.6" r="1.5" fill="#c4c4c4"/></svg>
<svg style="left:1245.5px;top:636px;" width="20" height="16" viewBox="0 0 20 16"><rect x="0" y="0" width="11" height="9" fill="#c4c4c4"/><rect x="7.4" y="5.8" width="12" height="9.4" fill="#1d1d1d" stroke="#c4c4c4" stroke-width="1.4"/><path d="M7.4 8.4h12M10 5.8v9.4M16.8 5.8v9.4" stroke="#c4c4c4" stroke-width="1"/></svg>
<svg style="left:1281px;top:637px;" width="15" height="14" viewBox="0 0 15 14"><rect x="1.6" y="1.6" width="11" height="10.6" fill="none" stroke="#c4c4c4" stroke-width="1.4" stroke-dasharray="2.2 1.4"/><path d="M0.4 0.4 L14 13.6" stroke="#c4c4c4" stroke-width="1.6"/><path d="M4 9.5l3-3 2 2 2-2.4" stroke="#c4c4c4" stroke-width="1.1" fill="none"/></svg>
<svg style="left:1361.8px;top:638.2px;" width="11" height="11" viewBox="0 0 11 11"><path d="M5.5 0V11M0 5.5H11" stroke="#c4c4c4" stroke-width="3"/></svg>
<svg style="left:1600px;top:51px;" width="16" height="13" viewBox="0 0 16 13"><rect x="0.7" y="0.7" width="14.8" height="11.8" fill="none" stroke="#c0c0c0" stroke-width="1.4"/><path d="M2.6 3.2h2.4v1.6H2.6zM2.6 5.7h2.4v1.6H2.6zM2.6 8.2h2.4v1.6H2.6z" fill="#c0c0c0"/></svg>
<svg style="left:1644px;top:47px;" width="17" height="18" viewBox="0 0 17 18"><path d="M4.6 6.6H1V16.8H16V6.6H12.4" fill="none" stroke="#c0c0c0" stroke-width="1.6"/><path d="M8.5 11.5V2.2" stroke="#c0c0c0" stroke-width="1.6"/><path d="M4.8 4.6 L8.5 0.6 L12.2 4.6z" fill="#c0c0c0"/></svg>
<svg style="left:1688px;top:49.5px;" width="17" height="14" viewBox="0 0 17 14"><path d="M1.6 1.8H14.6M1.6 7H14.6M1.6 12.2H14.6" stroke="#c0c0c0" stroke-width="2.8" stroke-linecap="round"/><path d="M8 1.8h6.4M10.5 7h4M7 12.2h7.5" stroke="#4e4e4e" stroke-width="1.1" stroke-linecap="round"/></svg>
<svg style="left:1732.5px;top:48px;" width="17" height="18" viewBox="0 0 17 18"><path d="M10.4 3.6 A5 5 0 1 0 11.6 9" fill="none" stroke="#c0c0c0" stroke-width="1.4"/><path d="M9.6 11.2 L13.6 16.4" stroke="#c0c0c0" stroke-width="2"/><path d="M6.3 5l0.8 1.7 1.8 0.2-1.4 1.2 0.5 1.8-1.7-1-1.7 1 0.5-1.8-1.4-1.2 1.8-0.2z" fill="#c0c0c0"/><path d="M12.6 0l1 2.2 2.2 1-2.2 1-1 2.2-1-2.2-2.2-1 2.2-1z" fill="#c0c0c0"/></svg>
<svg style="left:1775.5px;top:48.5px;" width="17" height="17" viewBox="0 0 17 17"><path d="M10.2 0.4H16.6V6.8z M6.8 16.6H0.4V10.2z" fill="#c0c0c0"/><path d="M13.6 3.4L9.8 7.2M3.4 13.6L7.2 9.8" stroke="#c0c0c0" stroke-width="1.8"/></svg>
<div class="t " style="left:1414.5px;top:81.5px;font-size:12px;color:#e2e2e2;">エフェクト</div>
<svg style="left:1484px;top:85px;" width="10" height="9" viewBox="0 0 10 9"><path d="M0 1H8.5M0 4.2H8.5M0 7.4H8.5" stroke="#c0c0c0" stroke-width="1.1"/></svg>
<div class="a" style="left:1413px;top:98.8px;width:79px;height:1.5px;background:#d2d2d2;"></div>
<div class="t " style="left:1516px;top:81.5px;font-size:12px;color:#b0b0b0;">プロパティ</div>
<div class="a" style="left:1412.5px;top:110.5px;width:191px;height:23.5px;background:#0d0d0d;border:1px solid #303030;border-radius:5px"></div>
<svg style="left:1420px;top:115px;" width="15" height="15" viewBox="0 0 15 15"><circle cx="5.8" cy="5.8" r="4.6" fill="none" stroke="#c4c4c4" stroke-width="1.4"/><path d="M9.2 9.2 L13.6 13.6" stroke="#c4c4c4" stroke-width="1.7"/></svg>
<div class="t " style="left:1445px;top:113.5px;font-size:12px;color:#cccccc;">モノクロ</div>
<svg style="left:1588px;top:117.5px;" width="9" height="9" viewBox="0 0 9 9"><path d="M0.8 0.8L8 8M8 0.8L0.8 8" stroke="#c8c8c8" stroke-width="1.4"/></svg>
<svg style="left:1615.5px;top:116px;" width="16" height="13.3" viewBox="0 0 16 13.3"><path d="M0 2.4H2.4V0H6.8V2.4H9.2V0H13.6V2.4H16V13.3H0z" fill="#b2b2b2"/><path d="M3.4 5.6h3.6M2.8 7.8h3.6M2.2 10h3.6" stroke="#1d1d1d" stroke-width="1.1"/><path d="M9 4.6V11.2L14 7.9z" fill="#1d1d1d"/></svg>
<svg style="left:1647.5px;top:116px;" width="16" height="13.3" viewBox="0 0 16 13.3"><path d="M0 2.4H2.4V0H6.8V2.4H9.2V0H13.6V2.4H16V13.3H0z" fill="#b2b2b2"/><text x="8" y="11.6" font-size="9" font-weight="700" text-anchor="middle" fill="#1d1d1d" font-family="Liberation Sans,sans-serif" letter-spacing="-0.4">32</text></svg>
<svg style="left:1680px;top:116px;" width="16" height="13.3" viewBox="0 0 16 13.3"><path d="M0 2.4H2.4V0H6.8V2.4H9.2V0H13.6V2.4H16V13.3H0z" fill="#b2b2b2"/><text x="8" y="10.4" font-size="6.4" font-weight="700" text-anchor="middle" fill="#1d1d1d" font-family="Liberation Sans,sans-serif" letter-spacing="-0.3">YUV</text></svg>
<div class="a" style="left:1412px;top:143px;width:396.5px;height:480.5px;border:1px solid #131313;border-radius:5px"></div>
<div class="a" style="left:1413px;top:481px;width:395px;height:24px;background:#333333;"></div>
<svg style="left:1422.4px;top:151.9px;" width="6" height="9.2" viewBox="0 0 6 9.2"><path d="M1 0.8 L4.7 4.6 L1 8.4" fill="none" stroke="#c4c4c4" stroke-width="1.9"/></svg>
<svg style="left:1438.5px;top:147.5px;" width="16" height="15" viewBox="0 0 16 15"><path d="M0.4 3.5H5.4V4.5H0.4z M0.4 5.7H14.6V14.6H0.4z" fill="#b2b2b2"/><path d="M11.4 -0.6l1.25 2.7 2.95 0.35-2.2 2 0.6 2.9-2.6-1.5-2.6 1.5 0.6-2.9-2.2-2 2.95-0.35z" fill="#b2b2b2" stroke="#1d1d1d" stroke-width="0.9"/></svg>
<div class="t " style="left:1460px;top:148.2px;font-size:12px;color:#c4c4c4;letter-spacing:-0.22px"><span style="font-size:10.8px">YouTube</span>プリセット</div>
<svg style="left:1421.6px;top:177.3px;" width="9.2" height="6" viewBox="0 0 9.2 6"><path d="M0.8 1 L4.6 4.7 L8.4 1" fill="none" stroke="#c4c4c4" stroke-width="1.9"/></svg>
<svg style="left:1438.5px;top:171.5px;" width="16" height="15" viewBox="0 0 16 15"><path d="M0.4 3.5H5.4V4.5H0.4z M0.4 5.7H14.6V14.6H0.4z" fill="#b2b2b2"/><path d="M11.4 -0.6l1.25 2.7 2.95 0.35-2.2 2 0.6 2.9-2.6-1.5-2.6 1.5 0.6-2.9-2.2-2 2.95-0.35z" fill="#b2b2b2" stroke="#1d1d1d" stroke-width="0.9"/></svg>
<div class="t " style="left:1460px;top:172.2px;font-size:12px;color:#c4c4c4;letter-spacing:-0.22px"><span style="font-size:10.8px">Lumetri </span>プリセット</div>
<svg style="left:1434.1px;top:201.3px;" width="9.2" height="6" viewBox="0 0 9.2 6"><path d="M0.8 1 L4.6 4.7 L8.4 1" fill="none" stroke="#c4c4c4" stroke-width="1.9"/></svg>
<svg style="left:1450px;top:195.5px;" width="16" height="15" viewBox="0 0 16 15"><path d="M0.4 3.5H5.4V4.5H0.4z M0.4 5.7H14.6V14.6H0.4z" fill="#b2b2b2"/><path d="M11.4 -0.6l1.25 2.7 2.95 0.35-2.2 2 0.6 2.9-2.6-1.5-2.6 1.5 0.6-2.9-2.2-2 2.95-0.35z" fill="#b2b2b2" stroke="#1d1d1d" stroke-width="0.9"/></svg>
<div class="t " style="left:1471.5px;top:196.2px;font-size:12px;color:#c4c4c4;letter-spacing:-0.22px">モノクロ</div>
<svg style="left:1463.5px;top:221.8px;" width="15" height="13.5" viewBox="0 0 15 13.5"><path d="M0.4 5.4H2.2V4H4.8V5.4H7.6V4H10.2V5.4H12.4V13.2H0.4z" fill="#b2b2b2"/><rect x="3.1" y="7.3" width="6.6" height="3.9" fill="#1d1d1d"/><path d="M1.3 7.6h1M1.3 9.3h1M1.3 11h1M10.5 7.6h1M10.5 9.3h1M10.5 11h1" stroke="#1d1d1d" stroke-width="0.9"/><path d="M11.70 -0.50 L12.55 1.73 L14.93 1.85 L13.08 3.35 L13.70 5.65 L11.70 4.35 L9.70 5.65 L10.32 3.35 L8.47 1.85 L10.85 1.73z" fill="#b2b2b2" stroke="#1d1d1d" stroke-width="0.9" paint-order="stroke"/></svg>
<div class="t " style="left:1481.8px;top:220.2px;font-size:12px;color:#c4c4c4;letter-spacing:-0.22px">モノクロのノーマルコントラスト</div>
<svg style="left:1768.5px;top:222.5px;" width="13" height="12" viewBox="0 0 13 12"><path d="M0 2H2.2V0H5.2V2H7.8V0H10.8V2H13V12H0z" fill="#b2b2b2"/><path d="M2.2 4.8h3.6M1.8 6.8h3.6M2.2 8.8h3.6" stroke="#1d1d1d" stroke-width="1"/><path d="M7.2 3.8V9.8L11.4 6.8z" fill="#1d1d1d"/></svg>
<svg style="left:1463.5px;top:245.8px;" width="15" height="13.5" viewBox="0 0 15 13.5"><path d="M0.4 5.4H2.2V4H4.8V5.4H7.6V4H10.2V5.4H12.4V13.2H0.4z" fill="#b2b2b2"/><rect x="3.1" y="7.3" width="6.6" height="3.9" fill="#1d1d1d"/><path d="M1.3 7.6h1M1.3 9.3h1M1.3 11h1M10.5 7.6h1M10.5 9.3h1M10.5 11h1" stroke="#1d1d1d" stroke-width="0.9"/><path d="M11.70 -0.50 L12.55 1.73 L14.93 1.85 L13.08 3.35 L13.70 5.65 L11.70 4.35 L9.70 5.65 L10.32 3.35 L8.47 1.85 L10.85 1.73z" fill="#b2b2b2" stroke="#1d1d1d" stroke-width="0.9" paint-order="stroke"/></svg>
<div class="t " style="left:1481.8px;top:244.2px;font-size:12px;color:#c4c4c4;letter-spacing:-0.22px">モノクロの色あせたフィルム</div>
<svg style="left:1768.5px;top:246.5px;" width="13" height="12" viewBox="0 0 13 12"><path d="M0 2H2.2V0H5.2V2H7.8V0H10.8V2H13V12H0z" fill="#b2b2b2"/><path d="M2.2 4.8h3.6M1.8 6.8h3.6M2.2 8.8h3.6" stroke="#1d1d1d" stroke-width="1"/><path d="M7.2 3.8V9.8L11.4 6.8z" fill="#1d1d1d"/></svg>
<svg style="left:1463.5px;top:269.8px;" width="15" height="13.5" viewBox="0 0 15 13.5"><path d="M0.4 5.4H2.2V4H4.8V5.4H7.6V4H10.2V5.4H12.4V13.2H0.4z" fill="#b2b2b2"/><rect x="3.1" y="7.3" width="6.6" height="3.9" fill="#1d1d1d"/><path d="M1.3 7.6h1M1.3 9.3h1M1.3 11h1M10.5 7.6h1M10.5 9.3h1M10.5 11h1" stroke="#1d1d1d" stroke-width="0.9"/><path d="M11.70 -0.50 L12.55 1.73 L14.93 1.85 L13.08 3.35 L13.70 5.65 L11.70 4.35 L9.70 5.65 L10.32 3.35 L8.47 1.85 L10.85 1.73z" fill="#b2b2b2" stroke="#1d1d1d" stroke-width="0.9" paint-order="stroke"/></svg>
<div class="t " style="left:1481.8px;top:268.2px;font-size:12px;color:#c4c4c4;letter-spacing:-0.22px">モノクロの色あせたフィルム (強)</div>
<svg style="left:1768.5px;top:270.5px;" width="13" height="12" viewBox="0 0 13 12"><path d="M0 2H2.2V0H5.2V2H7.8V0H10.8V2H13V12H0z" fill="#b2b2b2"/><path d="M2.2 4.8h3.6M1.8 6.8h3.6M2.2 8.8h3.6" stroke="#1d1d1d" stroke-width="1"/><path d="M7.2 3.8V9.8L11.4 6.8z" fill="#1d1d1d"/></svg>
<svg style="left:1463.5px;top:293.8px;" width="15" height="13.5" viewBox="0 0 15 13.5"><path d="M0.4 5.4H2.2V4H4.8V5.4H7.6V4H10.2V5.4H12.4V13.2H0.4z" fill="#b2b2b2"/><rect x="3.1" y="7.3" width="6.6" height="3.9" fill="#1d1d1d"/><path d="M1.3 7.6h1M1.3 9.3h1M1.3 11h1M10.5 7.6h1M10.5 9.3h1M10.5 11h1" stroke="#1d1d1d" stroke-width="0.9"/><path d="M11.70 -0.50 L12.55 1.73 L14.93 1.85 L13.08 3.35 L13.70 5.65 L11.70 4.35 L9.70 5.65 L10.32 3.35 L8.47 1.85 L10.85 1.73z" fill="#b2b2b2" stroke="#1d1d1d" stroke-width="0.9" paint-order="stroke"/></svg>
<div class="t " style="left:1481.8px;top:292.2px;font-size:12px;color:#c4c4c4;letter-spacing:-0.22px">モノクロの色あせたフィルム <span style="font-size:10.8px">100</span></div>
<svg style="left:1768.5px;top:294.5px;" width="13" height="12" viewBox="0 0 13 12"><path d="M0 2H2.2V0H5.2V2H7.8V0H10.8V2H13V12H0z" fill="#b2b2b2"/><path d="M2.2 4.8h3.6M1.8 6.8h3.6M2.2 8.8h3.6" stroke="#1d1d1d" stroke-width="1"/><path d="M7.2 3.8V9.8L11.4 6.8z" fill="#1d1d1d"/></svg>
<svg style="left:1463.5px;top:317.8px;" width="15" height="13.5" viewBox="0 0 15 13.5"><path d="M0.4 5.4H2.2V4H4.8V5.4H7.6V4H10.2V5.4H12.4V13.2H0.4z" fill="#b2b2b2"/><rect x="3.1" y="7.3" width="6.6" height="3.9" fill="#1d1d1d"/><path d="M1.3 7.6h1M1.3 9.3h1M1.3 11h1M10.5 7.6h1M10.5 9.3h1M10.5 11h1" stroke="#1d1d1d" stroke-width="0.9"/><path d="M11.70 -0.50 L12.55 1.73 L14.93 1.85 L13.08 3.35 L13.70 5.65 L11.70 4.35 L9.70 5.65 L10.32 3.35 L8.47 1.85 L10.85 1.73z" fill="#b2b2b2" stroke="#1d1d1d" stroke-width="0.9" paint-order="stroke"/></svg>
<div class="t " style="left:1481.8px;top:316.2px;font-size:12px;color:#c4c4c4;letter-spacing:-0.22px">モノクロの色あせたフィルム <span style="font-size:10.8px">150</span></div>
<svg style="left:1768.5px;top:318.5px;" width="13" height="12" viewBox="0 0 13 12"><path d="M0 2H2.2V0H5.2V2H7.8V0H10.8V2H13V12H0z" fill="#b2b2b2"/><path d="M2.2 4.8h3.6M1.8 6.8h3.6M2.2 8.8h3.6" stroke="#1d1d1d" stroke-width="1"/><path d="M7.2 3.8V9.8L11.4 6.8z" fill="#1d1d1d"/></svg>
<svg style="left:1463.5px;top:341.8px;" width="15" height="13.5" viewBox="0 0 15 13.5"><path d="M0.4 5.4H2.2V4H4.8V5.4H7.6V4H10.2V5.4H12.4V13.2H0.4z" fill="#b2b2b2"/><rect x="3.1" y="7.3" width="6.6" height="3.9" fill="#1d1d1d"/><path d="M1.3 7.6h1M1.3 9.3h1M1.3 11h1M10.5 7.6h1M10.5 9.3h1M10.5 11h1" stroke="#1d1d1d" stroke-width="0.9"/><path d="M11.70 -0.50 L12.55 1.73 L14.93 1.85 L13.08 3.35 L13.70 5.65 L11.70 4.35 L9.70 5.65 L10.32 3.35 L8.47 1.85 L10.85 1.73z" fill="#b2b2b2" stroke="#1d1d1d" stroke-width="0.9" paint-order="stroke"/></svg>
<div class="t " style="left:1481.8px;top:340.2px;font-size:12px;color:#c4c4c4;letter-spacing:-0.22px">モノクロの色あせたフィルム <span style="font-size:10.8px">50</span></div>
<svg style="left:1768.5px;top:342.5px;" width="13" height="12" viewBox="0 0 13 12"><path d="M0 2H2.2V0H5.2V2H7.8V0H10.8V2H13V12H0z" fill="#b2b2b2"/><path d="M2.2 4.8h3.6M1.8 6.8h3.6M2.2 8.8h3.6" stroke="#1d1d1d" stroke-width="1"/><path d="M7.2 3.8V9.8L11.4 6.8z" fill="#1d1d1d"/></svg>
<svg style="left:1463.5px;top:365.8px;" width="15" height="13.5" viewBox="0 0 15 13.5"><path d="M0.4 5.4H2.2V4H4.8V5.4H7.6V4H10.2V5.4H12.4V13.2H0.4z" fill="#b2b2b2"/><rect x="3.1" y="7.3" width="6.6" height="3.9" fill="#1d1d1d"/><path d="M1.3 7.6h1M1.3 9.3h1M1.3 11h1M10.5 7.6h1M10.5 9.3h1M10.5 11h1" stroke="#1d1d1d" stroke-width="0.9"/><path d="M11.70 -0.50 L12.55 1.73 L14.93 1.85 L13.08 3.35 L13.70 5.65 L11.70 4.35 L9.70 5.65 L10.32 3.35 L8.47 1.85 L10.85 1.73z" fill="#b2b2b2" stroke="#1d1d1d" stroke-width="0.9" paint-order="stroke"/></svg>
<div class="t " style="left:1481.8px;top:364.2px;font-size:12px;color:#c4c4c4;letter-spacing:-0.22px">モノクロパンチ</div>
<svg style="left:1768.5px;top:366.5px;" width="13" height="12" viewBox="0 0 13 12"><path d="M0 2H2.2V0H5.2V2H7.8V0H10.8V2H13V12H0z" fill="#b2b2b2"/><path d="M2.2 4.8h3.6M1.8 6.8h3.6M2.2 8.8h3.6" stroke="#1d1d1d" stroke-width="1"/><path d="M7.2 3.8V9.8L11.4 6.8z" fill="#1d1d1d"/></svg>
<svg style="left:1422.4px;top:391.9px;" width="6" height="9.2" viewBox="0 0 6 9.2"><path d="M1 0.8 L4.7 4.6 L1 8.4" fill="none" stroke="#c4c4c4" stroke-width="1.9"/></svg>
<svg style="left:1438.9px;top:390.9px;" width="14.2" height="11.2" viewBox="0 0 14.2 11.2"><path d="M0 0H5V1H0z M0 2.2H14.2V11H0z" fill="#b2b2b2"/></svg>
<div class="t " style="left:1460px;top:388.2px;font-size:12px;color:#c4c4c4;letter-spacing:-0.22px">オーディオエフェクト</div>
<svg style="left:1422.4px;top:415.9px;" width="6" height="9.2" viewBox="0 0 6 9.2"><path d="M1 0.8 L4.7 4.6 L1 8.4" fill="none" stroke="#c4c4c4" stroke-width="1.9"/></svg>
<svg style="left:1438.9px;top:414.9px;" width="14.2" height="11.2" viewBox="0 0 14.2 11.2"><path d="M0 0H5V1H0z M0 2.2H14.2V11H0z" fill="#b2b2b2"/></svg>
<div class="t " style="left:1460px;top:412.2px;font-size:12px;color:#c4c4c4;letter-spacing:-0.22px">オーディオトランジション</div>
<svg style="left:1421.6px;top:441.3px;" width="9.2" height="6" viewBox="0 0 9.2 6"><path d="M0.8 1 L4.6 4.7 L8.4 1" fill="none" stroke="#c4c4c4" stroke-width="1.9"/></svg>
<svg style="left:1438.9px;top:438.9px;" width="14.2" height="11.2" viewBox="0 0 14.2 11.2"><path d="M0 0H5V1H0z M0 2.2H14.2V11H0z" fill="#b2b2b2"/></svg>
<div class="t " style="left:1460px;top:436.2px;font-size:12px;color:#c4c4c4;letter-spacing:-0.22px">ビデオエフェクト</div>
<svg style="left:1434.1px;top:465.3px;" width="9.2" height="6" viewBox="0 0 9.2 6"><path d="M0.8 1 L4.6 4.7 L8.4 1" fill="none" stroke="#c4c4c4" stroke-width="1.9"/></svg>
<svg style="left:1450.4px;top:462.9px;" width="14.2" height="11.2" viewBox="0 0 14.2 11.2"><path d="M0 0H5V1H0z M0 2.2H14.2V11H0z" fill="#b2b2b2"/></svg>
<div class="t " style="left:1471.5px;top:460.2px;font-size:12px;color:#c4c4c4;letter-spacing:-0.22px">イメージコントロール</div>
<svg style="left:1463.5px;top:485.8px;" width="15" height="13.5" viewBox="0 0 15 13.5"><path d="M0.4 5.4H2.2V4H4.8V5.4H7.6V4H10.2V5.4H12.4V13.2H0.4z" fill="#b2b2b2"/><rect x="3.1" y="7.3" width="6.6" height="3.9" fill="#1d1d1d"/><path d="M1.3 7.6h1M1.3 9.3h1M1.3 11h1M10.5 7.6h1M10.5 9.3h1M10.5 11h1" stroke="#1d1d1d" stroke-width="0.9"/></svg>
<div class="t " style="left:1481.8px;top:484.2px;font-size:12px;color:#c4c4c4;letter-spacing:-0.22px">モノクロ</div>
<svg style="left:1768.5px;top:486.5px;" width="13" height="12" viewBox="0 0 13 12"><path d="M0 2H2.2V0H5.2V2H7.8V0H10.8V2H13V12H0z" fill="#b2b2b2"/><path d="M2.2 4.8h3.6M1.8 6.8h3.6M2.2 8.8h3.6" stroke="#1d1d1d" stroke-width="1"/><path d="M7.2 3.8V9.8L11.4 6.8z" fill="#1d1d1d"/></svg>
<svg style="left:1422.4px;top:511.9px;" width="6" height="9.2" viewBox="0 0 6 9.2"><path d="M1 0.8 L4.7 4.6 L1 8.4" fill="none" stroke="#c4c4c4" stroke-width="1.9"/></svg>
<svg style="left:1438.9px;top:510.9px;" width="14.2" height="11.2" viewBox="0 0 14.2 11.2"><path d="M0 0H5V1H0z M0 2.2H14.2V11H0z" fill="#b2b2b2"/></svg>
<div class="t " style="left:1460px;top:508.20000000000005px;font-size:12px;color:#c4c4c4;letter-spacing:-0.22px">ビデオトランジション</div>
<svg style="left:1422.4px;top:535.9px;" width="6" height="9.2" viewBox="0 0 6 9.2"><path d="M1 0.8 L4.7 4.6 L1 8.4" fill="none" stroke="#c4c4c4" stroke-width="1.9"/></svg>
<svg style="left:1438.5px;top:531.5px;" width="16" height="15" viewBox="0 0 16 15"><path d="M0.4 3.5H5.4V4.5H0.4z M0.4 5.7H14.6V14.6H0.4z" fill="#b2b2b2"/><path d="M11.4 -0.6l1.25 2.7 2.95 0.35-2.2 2 0.6 2.9-2.6-1.5-2.6 1.5 0.6-2.9-2.2-2 2.95-0.35z" fill="#b2b2b2" stroke="#1d1d1d" stroke-width="0.9"/></svg>
<div class="t " style="left:1460px;top:532.2px;font-size:12px;color:#c4c4c4;letter-spacing:-0.22px">プリセット</div>
<svg style="left:1422.4px;top:559.9px;" width="6" height="9.2" viewBox="0 0 6 9.2"><path d="M1 0.8 L4.7 4.6 L1 8.4" fill="none" stroke="#c4c4c4" stroke-width="1.9"/></svg>
<svg style="left:1438.5px;top:555.5px;" width="16" height="15" viewBox="0 0 16 15"><path d="M0.4 3.5H5.4V4.5H0.4z M0.4 5.7H14.6V14.6H0.4z" fill="#b2b2b2"/><path d="M11.4 -0.6l1.25 2.7 2.95 0.35-2.2 2 0.6 2.9-2.6-1.5-2.6 1.5 0.6-2.9-2.2-2 2.95-0.35z" fill="#b2b2b2" stroke="#1d1d1d" stroke-width="0.9"/></svg>
<div class="t " style="left:1460px;top:556.2px;font-size:12px;color:#c4c4c4;letter-spacing:-0.22px"><span style="font-size:11.2px">T.edit_animation</span></div>
<svg style="left:1757.5px;top:640px;" width="14" height="11" viewBox="0 0 14 11"><path d="M0 0H5.2L6.4 1.6H14V11H0z" fill="#aaaaaa"/></svg>
<svg style="left:1791px;top:639px;" width="11" height="13" viewBox="0 0 11 13"><path d="M0.6 2.6H10.4M3.6 2.4V0.8H7.4V2.4" stroke="#5c5c5c" stroke-width="1.1" fill="none"/><path d="M1.4 3.6H9.6L9 12.4H2z" fill="none" stroke="#5c5c5c" stroke-width="1.1"/><path d="M4 5v6M5.5 5v6M7 5v6" stroke="#5c5c5c" stroke-width="0.9"/></svg>
<div class="a" style="left:69px;top:688px;width:24px;height:24px;background:#0d66e4;border-radius:4px"></div>
<svg style="left:75px;top:692px;" width="13" height="17" viewBox="0 0 13 17"><path d="M1 0.6 V16 L5.2 11.6 H12.4z" fill="#ffffff"/></svg>
<svg style="left:104px;top:693px;" width="20" height="18" viewBox="0 0 20 18"><rect x="0.7" y="0.7" width="9" height="9.6" fill="none" stroke="#c4c4c4" stroke-width="1.3" stroke-dasharray="2.6 1.6"/><path d="M6 4.2h5.6V1.4L16.6 5.5 11.6 9.6V6.8H6z" fill="#c4c4c4"/><path d="M18.6 13.4v3.4h-3.4z" fill="#c4c4c4"/></svg>
<svg style="left:70.5px;top:724.5px;" width="23" height="18" viewBox="0 0 23 18"><path d="M10.6 0v15.5" stroke="#c4c4c4" stroke-width="1.7"/><path d="M0.4 7.6 L6 3.6 V6.4 H9 V8.8 H6 V11.6z M20.8 7.6 L15.2 3.6 V6.4 H12.2 V8.8 H15.2 V11.6z" fill="#c4c4c4"/><path d="M21.6 13.4v3.4h-3.4z" fill="#c4c4c4"/></svg>
<svg style="left:104px;top:724px;" width="19" height="18" viewBox="0 0 19 18"><g transform="rotate(40 9 8.5)"><rect x="1" y="4" width="16.5" height="9.4" rx="1.2" fill="#c4c4c4"/><path d="M5 8.7h2M8.3 8.7h2M11.6 8.7h2" stroke="#1d1d1d" stroke-width="1.7"/></g></svg>
<svg style="left:70.5px;top:756.5px;" width="22" height="17" viewBox="0 0 22 17"><path d="M1 0.4v16.4M20.4 0.4v16.4" stroke="#c4c4c4" stroke-width="1.6"/><path d="M3.4 8.6 L7.8 5.2 V7.6 H13.8 V5.2 L18.2 8.6 L13.8 12 V9.6 H7.8 V12z" fill="#c4c4c4"/></svg>
<svg style="left:104px;top:756px;" width="19" height="18" viewBox="0 0 19 18"><path d="M11.6 0.8 L17.4 6.2 L15 8.6 L9.2 3.2z M8.2 4.2 L14 9.6 L10 14.2 L1.2 16.6 L3.8 8.2z" fill="#c4c4c4"/><circle cx="7.8" cy="10.2" r="1.4" fill="#1d1d1d"/></svg>
<svg style="left:72px;top:788.5px;" width="20" height="18" viewBox="0 0 20 18"><rect x="0.8" y="0.8" width="15.6" height="12.8" fill="#3a3a3a" stroke="#c4c4c4" stroke-width="1.3"/><path d="M19.4 13.4v3.4h-3.4z" fill="#c4c4c4"/></svg>
<svg style="left:103.5px;top:788px;" width="21" height="18" viewBox="0 0 21 18"><path d="M5.6 8.8 V2.6 a1 1 0 0 1 2 0 V7 h0.5 V1.2 a1 1 0 0 1 2 0 V7 h0.5 V2 a1 1 0 0 1 2 0 V7.6 h0.5 V4 a1 1 0 0 1 2 0 V11 c0 3.4-1.8 5.6-5 5.6 c-2.4 0-3.6-1-4.8-3 L1.4 9.4 c-0.5-1 0.8-1.8 1.6-1z" fill="#c4c4c4"/><path d="M20.4 13.4v3.4h-3.4z" fill="#c4c4c4"/></svg>
<svg style="left:72.5px;top:820px;" width="20" height="18" viewBox="0 0 20 18"><path d="M0.6 0.6H14.8V4.6H13V2.8H9V14.2H11V16H4.4V14.2H6.4V2.8H2.4V4.6H0.6z" fill="#c4c4c4"/><path d="M19 13.4v3.4h-3.4z" fill="#c4c4c4"/></svg>
<div class="a" style="left:101px;top:816px;width:24px;height:24px;border:1.2px solid #6c42c0;border-radius:4px;background:#1a1a1f"></div>
<svg style="left:105px;top:820px;" width="16" height="16" viewBox="0 0 16 16"><path d="M3 1.4v3.2M1.4 3h3.2" stroke="#c4c4c4" stroke-width="1.1"/><path d="M5.6 5h5.2M8.2 5v9.4M6.4 14.4h3.6" stroke="#c4c4c4" stroke-width="1.4"/><path d="M13 1l0.7 1.8 1.8 0.7-1.8 0.7L13 6l-0.7-1.8-1.8-0.7 1.8-0.7z M12.4 9.2l0.6 1.4 1.4 0.6-1.4 0.6-0.6 1.4-0.6-1.4-1.4-0.6 1.4-0.6z" fill="#c4c4c4"/></svg>
<svg style="left:161.5px;top:682.5px;" width="6" height="6" viewBox="0 0 6 6"><path d="M0.5 0.5L5.5 5.5M5.5 0.5L0.5 5.5" stroke="#b0b0b0" stroke-width="1"/></svg>
<div class="a" style="left:176.3px;top:678px;width:9.7px;height:9.8px;background:#3b4a10;"></div>
<div class="t " style="left:198px;top:676.5px;font-size:12px;color:#c8c8c8;letter-spacing:-0.5px">サンプル</div>
<svg style="left:255px;top:680.5px;" width="9" height="8" viewBox="0 0 9 8"><path d="M0 0.8H8.2M0 3.9H8.2M0 7H8.2" stroke="#c0c0c0" stroke-width="1.1"/></svg>
<div class="t " style="left:168.5px;top:701.8px;font-size:14px;color:#4a9bef;letter-spacing:0.2px;-webkit-text-stroke:0.35px #4a9bef">00;00;00;20</div>
<div class="a" style="left:163.2px;top:724.3px;width:23.8px;height:23.4px;background:#494949;border-radius:4px"></div>
<div class="a" style="left:195px;top:724.3px;width:23.8px;height:23.4px;background:#494949;border-radius:4px"></div>
<div class="a" style="left:227px;top:724.3px;width:23.8px;height:23.4px;background:#494949;border-radius:4px"></div>
<svg style="left:168px;top:729px;" width="15" height="15" viewBox="0 0 15 15"><path d="M7.4 0.6v13.8" stroke="#e0e0e0" stroke-width="1.4"/><circle cx="7.4" cy="1.4" r="1.3" fill="#e0e0e0"/><path d="M0.4 5h5M9.6 4.4h4.2M1.6 8.6h3.8M9.6 8h5M0.4 12h5M9.6 11.6h3.6" stroke="#e0e0e0" stroke-width="1.6"/></svg>
<svg style="left:200.5px;top:729.5px;" width="13" height="13" viewBox="0 0 13 13"><path d="M1.8 12.4 V6.2 a4.7 4.7 0 0 1 9.4 0 V12.4" fill="none" stroke="#e0e0e0" stroke-width="2.6"/><path d="M0.5 10.6h2.6v2H0.5zM9.9 10.6h2.6v2H9.9z" fill="#8a8a8a"/></svg>
<svg style="left:231.5px;top:729px;" width="16" height="15" viewBox="0 0 16 15"><path d="M0.5 1.2h5v4.6h-5z" fill="#e0e0e0"/><path d="M0.9 8h4.2v4.6H0.9z" fill="none" stroke="#e0e0e0" stroke-width="1.1"/><path d="M6.6 0.4 V14 L10 10.6 L15.4 10.2z" fill="#e0e0e0"/></svg>
<svg style="left:267px;top:732px;" width="9" height="10" viewBox="0 0 9 10"><path d="M0.3 0H8.3V5.4L4.3 9.2L0.3 5.4z" fill="#c0c0c0"/></svg>
<svg style="left:296px;top:729.5px;" width="14" height="14" viewBox="0 0 14 14"><path d="M3.4 0.8 a3.7 3.7 0 0 0 -2 5.1 a3.7 3.7 0 0 0 4.5 1.7 L11.3 13 a1.35 1.35 0 0 0 1.9 -1.9 L7.6 5.6 a3.7 3.7 0 0 0 -1.7 -4.5 L5.9 3.5 L4.1 4.7 L2.7 3.7z" fill="#c4c4c4"/></svg>
<div class="a" style="left:327px;top:731.3px;width:16px;height:9.8px;background:#5e5e5e;border-radius:2.2px;font-size:8px;line-height:10px;color:#1d1d1d;font-weight:700;text-align:center;letter-spacing:-0.3px">CC</div>
<div class="a" style="left:163px;top:755px;width:192px;height:1px;background:#333333;"></div>
<div class="t " style="left:355.8px;top:727.3px;font-size:11px;color:#b8b8b8;letter-spacing:-0.22px">;00;00</div>
<div class="t " style="left:407.7px;top:727.3px;font-size:11px;color:#b8b8b8;letter-spacing:-0.22px">00;00;02;00</div>
<div class="t " style="left:487.5px;top:727.3px;font-size:11px;color:#b8b8b8;letter-spacing:-0.22px">00;00;04;00</div>
<div class="t " style="left:567.3px;top:727.3px;font-size:11px;color:#b8b8b8;letter-spacing:-0.22px">00;00;06;00</div>
<div class="t " style="left:647.1px;top:727.3px;font-size:11px;color:#b8b8b8;letter-spacing:-0.22px">00;00;08;00</div>
<div class="t " style="left:726.9px;top:727.3px;font-size:11px;color:#b8b8b8;letter-spacing:-0.22px">00;00;10;00</div>
<div class="t " style="left:806.6px;top:727.3px;font-size:11px;color:#b8b8b8;letter-spacing:-0.22px">00;00;12;00</div>
<div class="t " style="left:886.4px;top:727.3px;font-size:11px;color:#b8b8b8;letter-spacing:-0.22px">00;00;14;00</div>
<div class="t " style="left:966.2px;top:727.3px;font-size:11px;color:#b8b8b8;letter-spacing:-0.22px">00;00;16;00</div>
<div class="t " style="left:1046.0px;top:727.3px;font-size:11px;color:#b8b8b8;letter-spacing:-0.22px">00;00;18;00</div>
<div class="t " style="left:1125.8px;top:727.3px;font-size:11px;color:#b8b8b8;letter-spacing:-0.22px">00;00;20;00</div>
<div class="t " style="left:1205.6px;top:727.3px;font-size:11px;color:#b8b8b8;letter-spacing:-0.22px">00;00;22;00</div>
<div class="t " style="left:1285.4px;top:727.3px;font-size:11px;color:#b8b8b8;letter-spacing:-0.22px">00;00;24;00</div>
<div class="t " style="left:1365.2px;top:727.3px;font-size:11px;color:#b8b8b8;letter-spacing:-0.22px">00;00;26;00</div>
<div class="t " style="left:1445.0px;top:727.3px;font-size:11px;color:#b8b8b8;letter-spacing:-0.22px">00;00;28;00</div>
<div class="t " style="left:1524.8px;top:727.3px;font-size:11px;color:#b8b8b8;letter-spacing:-0.22px">00;00;30;00</div>
<div class="t " style="left:1604.5px;top:727.3px;font-size:11px;color:#b8b8b8;letter-spacing:-0.22px">00;00;32;00</div>
<div class="t " style="left:1684.3px;top:727.3px;font-size:11px;color:#b8b8b8;letter-spacing:-0.22px">00;00;34;00</div>
<div class="t " style="left:1765.0px;top:727.3px;font-size:11px;color:#b8b8b8;letter-spacing:-0.22px">00;00;</div>
<div class="a" style="left:355.2px;top:748px;width:1437px;height:6px;background:repeating-linear-gradient(90deg,#8e8e8e 0 1px,transparent 1px 5.3193px)"></div>
<div class="a" style="left:355.2px;top:742.5px;width:1437px;height:6px;background:repeating-linear-gradient(90deg,#8e8e8e 0 1px,transparent 1px 79.79px)"></div>
<div class="a" style="left:355px;top:753.6px;width:164px;height:2.4px;background:#f6e92f;"></div>
<div class="a" style="left:151px;top:775px;width:1640px;height:1px;background:#2d2d2d;"></div>
<div class="a" style="left:151px;top:816px;width:1640px;height:1px;background:#2d2d2d;"></div>
<div class="a" style="left:151px;top:857px;width:1640px;height:1px;background:#2d2d2d;"></div>
<div class="a" style="left:151px;top:943px;width:1640px;height:1px;background:#2d2d2d;"></div>
<div class="a" style="left:151px;top:984px;width:1640px;height:1px;background:#2d2d2d;"></div>
<div class="a" style="left:151px;top:1025px;width:1640px;height:1px;background:#2d2d2d;"></div>
<div class="a" style="left:150px;top:898px;width:1648px;height:4.5px;background:#2d2d2d;"></div>
<div class="a" style="left:354.4px;top:742px;width:1px;height:304px;background:#2d2d2d;"></div>
<div class="a" style="left:355px;top:817.2px;width:163.4px;height:39.4px;background:#8c1f99;border:2px solid #f4f4f4;border-radius:3px"></div>
<div class="a" style="left:357.4px;top:833px;width:40.4px;height:21.4px;background:#000;"></div>
<div class="t " style="left:363px;top:818px;font-size:11px;color:#ecd0f0;letter-spacing:-0.3px">調整レイヤー</div>
<div class="t " style="left:498.6px;top:818px;font-size:10.6px;color:#f0dcf4;font-style:italic;letter-spacing:-0.6px">ƒx</div>
<div class="a" style="left:355.2px;top:858px;width:162.9px;height:39.6px;background:#024c64;border-radius:2px"></div>
<div class="t " style="left:363.5px;top:859.2px;font-size:11px;color:#d4e2ea;letter-spacing:-0.3px">サンプル<span style="font-size:11.2px">.mp4 [V]</span></div>
<div class="t " style="left:498.6px;top:859px;font-size:10.6px;color:#3d7f96;font-style:italic;letter-spacing:-0.6px">ƒx</div>
<svg style="left:355.2px;top:874.2px;" width="43" height="23.4" viewBox="0 0 43 23.4"><defs><filter id="tn" x="0" y="0" width="100%" height="100%" color-interpolation-filters="sRGB"><feTurbulence type="fractalNoise" baseFrequency="1.4 0.9" numOctaves="2" seed="5" result="t"/><feColorMatrix in="t" type="matrix" values="1.3 0 0 0 -0.15 1.3 0 0 0 -0.15 1.3 0 0 0 -0.15 0 0 0 0 1" result="n"/><feComposite in="SourceGraphic" in2="n" operator="arithmetic" k2="1" k3="0.5" k4="-0.25" result="c"/><feComposite in="c" in2="SourceGraphic" operator="in"/></filter></defs>
<rect width="43" height="23.4" fill="#5a86cf"/><path d="M7 0H43V23.4H0.8z" fill="#a09f9a" filter="url(#tn)"/><path d="M10 23.4L43 11.6V13.6L14 23.4z" fill="#98684a"/><path d="M2 24L18 8" stroke="#444" stroke-width="0.9"/><path d="M1 23.6C8 20 12 14 17.5 8" stroke="#e8432e" stroke-width="0.8" fill="none"/><path d="M16.6 10.2L22.4 7 23.2 8 17.4 11z" fill="#cf2c2e"/></svg>
<svg style="left:355.2px;top:858px;" width="163" height="5" viewBox="0 0 163 5"><path d="M0 0H4.6L0 4.6z M163 0H158.4L163 4.6z" fill="#f4f4f4"/></svg>
<svg style="left:355.2px;top:903.2px;" width="163" height="5" viewBox="0 0 163 5"><path d="M0 0H4.6L0 4.6z M163 0H158.4L163 4.6z" fill="#f4f4f4"/></svg>
<div class="a" style="left:355.2px;top:903.2px;width:162.9px;height:39.6px;background:#024c64;border-radius:2px;border-bottom:1.3px solid #4aaee8"></div>
<div class="a" style="left:355.6px;top:924.3px;width:162.4px;height:2px;background:#8fa3ab;"></div>
<div class="a" style="left:355.2px;top:930px;width:162.9px;height:1.2px;background:#4fb2ee;"></div>
<svg style="left:475.5px;top:907px;" width="12" height="10" viewBox="0 0 12 10"><path d="M0.8 3.4v3.2M3.4 1.8v6.4M6 4v2M8.8 0.2v9.6M11.4 3v4" stroke="#eef2f4" stroke-width="1"/></svg>
<div class="t " style="left:498.6px;top:904.5px;font-size:10.6px;color:#3d7f96;font-style:italic;letter-spacing:-0.6px">ƒx</div>
<div class="a" style="left:355.6px;top:1036.8px;width:1430px;height:2.3px;background:#9c9c9c;"></div>
<div class="a" style="left:355.6px;top:1039.1px;width:1430px;height:1px;background:#0c0c0c;"></div>
<div class="a" style="left:381px;top:751px;width:1.3px;height:294.5px;background:#3f8ee6;"></div>
<svg style="left:375.8px;top:742.3px;" width="11.4" height="11" viewBox="0 0 11.4 11"><path d="M0 0H11.4V6.4L6.6 10.6H4.8L0 6.4z" fill="#4a9bef"/></svg>
<svg style="left:194.2px;top:788.4000000000001px;" width="11" height="14" viewBox="0 0 11 14"><path d="M2.2 6.6 V3.6 a2.6 2.6 0 0 1 5.2 -0.4" fill="none" stroke="#b8b8b8" stroke-width="1.5"/><rect x="0.8" y="6" width="9.8" height="7.4" rx="0.8" fill="#b8b8b8"/><path d="M5 8.2h1.4v3H5z" fill="#1d1d1d"/></svg>
<div class="t " style="left:216.5px;top:789.0px;font-size:11px;color:#b8b8b8;letter-spacing:-0.3px">V3</div>
<svg style="left:240.6px;top:791.9000000000001px;" width="13" height="9.6" viewBox="0 0 13 9.6"><path d="M0.6 0.6H7.6V3.4H0.6z M0.6 6.2H7.6V9H0.6z" fill="none" stroke="#b8b8b8" stroke-width="1.2"/><path d="M7.6 1.3H11.8V8.3H7.6" fill="none" stroke="#b8b8b8" stroke-width="1.5"/></svg>
<svg style="left:264px;top:792.1px;" width="13.4" height="9.2" viewBox="0 0 13.4 9.2"><path d="M0.5 4.6 C3 0.2 10.4 0.2 12.9 4.6 C10.4 9 3 9 0.5 4.6z" fill="none" stroke="#b8b8b8" stroke-width="1.3"/><circle cx="6.7" cy="4.4" r="2.5" fill="#b8b8b8"/><circle cx="6.2" cy="3.8" r="0.8" fill="#1d1d1d"/></svg>
<svg style="left:194.2px;top:829.7px;" width="11" height="14" viewBox="0 0 11 14"><path d="M2.2 6.6 V3.6 a2.6 2.6 0 0 1 5.2 -0.4" fill="none" stroke="#b8b8b8" stroke-width="1.5"/><rect x="0.8" y="6" width="9.8" height="7.4" rx="0.8" fill="#b8b8b8"/><path d="M5 8.2h1.4v3H5z" fill="#1d1d1d"/></svg>
<div class="t " style="left:216.5px;top:830.3px;font-size:11px;color:#b8b8b8;letter-spacing:-0.3px">V2</div>
<svg style="left:240.6px;top:833.2px;" width="13" height="9.6" viewBox="0 0 13 9.6"><path d="M0.6 0.6H7.6V3.4H0.6z M0.6 6.2H7.6V9H0.6z" fill="none" stroke="#b8b8b8" stroke-width="1.2"/><path d="M7.6 1.3H11.8V8.3H7.6" fill="none" stroke="#b8b8b8" stroke-width="1.5"/></svg>
<svg style="left:264px;top:833.4px;" width="13.4" height="9.2" viewBox="0 0 13.4 9.2"><path d="M0.5 4.6 C3 0.2 10.4 0.2 12.9 4.6 C10.4 9 3 9 0.5 4.6z" fill="none" stroke="#b8b8b8" stroke-width="1.3"/><circle cx="6.7" cy="4.4" r="2.5" fill="#b8b8b8"/><circle cx="6.2" cy="3.8" r="0.8" fill="#1d1d1d"/></svg>
<div class="a" style="left:163.2px;top:858px;width:23.7px;height:39.5px;background:#0658c8;border-radius:5px"></div>
<div class="t " style="left:168.1px;top:871.05px;font-size:11px;color:#ffffff;letter-spacing:-0.4px;-webkit-text-stroke:0.3px #fff">V1</div>
<div class="a" style="left:211.2px;top:858px;width:23.7px;height:39.5px;background:#0658c8;border-radius:5px"></div>
<div class="t " style="left:216.1px;top:871.05px;font-size:11px;color:#ffffff;letter-spacing:-0.4px;-webkit-text-stroke:0.3px #fff">V1</div>
<svg style="left:194.2px;top:870.8000000000001px;" width="11" height="14" viewBox="0 0 11 14"><path d="M2.2 6.6 V3.6 a2.6 2.6 0 0 1 5.2 -0.4" fill="none" stroke="#b8b8b8" stroke-width="1.5"/><rect x="0.8" y="6" width="9.8" height="7.4" rx="0.8" fill="#b8b8b8"/><path d="M5 8.2h1.4v3H5z" fill="#1d1d1d"/></svg>
<svg style="left:240.6px;top:874.2px;" width="13" height="9.6" viewBox="0 0 13 9.6"><path d="M0.6 0.6H7.6V3.4H0.6z M0.6 6.2H7.6V9H0.6z" fill="none" stroke="#b8b8b8" stroke-width="1.2"/><path d="M7.6 1.3H11.8V8.3H7.6" fill="none" stroke="#b8b8b8" stroke-width="1.5"/></svg>
<svg style="left:264px;top:874.4px;" width="13.4" height="9.2" viewBox="0 0 13.4 9.2"><path d="M0.5 4.6 C3 0.2 10.4 0.2 12.9 4.6 C10.4 9 3 9 0.5 4.6z" fill="none" stroke="#b8b8b8" stroke-width="1.3"/><circle cx="6.7" cy="4.4" r="2.5" fill="#b8b8b8"/><circle cx="6.2" cy="3.8" r="0.8" fill="#1d1d1d"/></svg>
<div class="a" style="left:211.2px;top:903.2px;width:23.7px;height:39.4px;background:#0658c8;border-radius:5px"></div>
<div class="t " style="left:216.1px;top:916.2px;font-size:11px;color:#ffffff;letter-spacing:-0.4px;-webkit-text-stroke:0.3px #fff">A1</div>
<svg style="left:194.2px;top:915.5px;" width="11" height="14" viewBox="0 0 11 14"><path d="M2.2 6.6 V3.6 a2.6 2.6 0 0 1 5.2 -0.4" fill="none" stroke="#b8b8b8" stroke-width="1.5"/><rect x="0.8" y="6" width="9.8" height="7.4" rx="0.8" fill="#b8b8b8"/><path d="M5 8.2h1.4v3H5z" fill="#1d1d1d"/></svg>
<svg style="left:240.6px;top:918.7px;" width="13" height="9.6" viewBox="0 0 13 9.6"><path d="M0.6 0.6H7.6V3.4H0.6z M0.6 6.2H7.6V9H0.6z" fill="none" stroke="#b8b8b8" stroke-width="1.2"/><path d="M7.6 1.3H11.8V8.3H7.6" fill="none" stroke="#b8b8b8" stroke-width="1.5"/></svg>
<div class="t " style="left:266.5px;top:915.5px;font-size:10px;color:#b0b0b0;">M</div>
<div class="t " style="left:291.6px;top:915.5px;font-size:10px;color:#b0b0b0;">S</div>
<svg style="left:313.6px;top:915.5999999999999px;" width="10" height="15" viewBox="0 0 10 15"><rect x="2.6" y="0.3" width="4.8" height="9.2" rx="2.4" fill="#b8b8b8"/><path d="M0.7 6.2 V7.4 a4.3 4.3 0 0 0 8.6 0 V6.2" fill="none" stroke="#b8b8b8" stroke-width="1.1"/><path d="M5 11.8v2.4M2.4 14.3h5.2" stroke="#b8b8b8" stroke-width="1.1"/></svg>
<div class="a" style="left:211.2px;top:944.4px;width:23.7px;height:39.4px;background:#0658c8;border-radius:5px"></div>
<div class="t " style="left:216.1px;top:957.4px;font-size:11px;color:#ffffff;letter-spacing:-0.4px;-webkit-text-stroke:0.3px #fff">A2</div>
<svg style="left:194.2px;top:956.4000000000001px;" width="11" height="14" viewBox="0 0 11 14"><path d="M2.2 6.6 V3.6 a2.6 2.6 0 0 1 5.2 -0.4" fill="none" stroke="#b8b8b8" stroke-width="1.5"/><rect x="0.8" y="6" width="9.8" height="7.4" rx="0.8" fill="#b8b8b8"/><path d="M5 8.2h1.4v3H5z" fill="#1d1d1d"/></svg>
<svg style="left:240.6px;top:959.6000000000001px;" width="13" height="9.6" viewBox="0 0 13 9.6"><path d="M0.6 0.6H7.6V3.4H0.6z M0.6 6.2H7.6V9H0.6z" fill="none" stroke="#b8b8b8" stroke-width="1.2"/><path d="M7.6 1.3H11.8V8.3H7.6" fill="none" stroke="#b8b8b8" stroke-width="1.5"/></svg>
<div class="t " style="left:266.5px;top:956.4000000000001px;font-size:10px;color:#b0b0b0;">M</div>
<div class="t " style="left:291.6px;top:956.4000000000001px;font-size:10px;color:#b0b0b0;">S</div>
<svg style="left:313.6px;top:956.5px;" width="10" height="15" viewBox="0 0 10 15"><rect x="2.6" y="0.3" width="4.8" height="9.2" rx="2.4" fill="#b8b8b8"/><path d="M0.7 6.2 V7.4 a4.3 4.3 0 0 0 8.6 0 V6.2" fill="none" stroke="#b8b8b8" stroke-width="1.1"/><path d="M5 11.8v2.4M2.4 14.3h5.2" stroke="#b8b8b8" stroke-width="1.1"/></svg>
<div class="a" style="left:211.2px;top:985.2px;width:23.7px;height:39.4px;background:#0658c8;border-radius:5px"></div>
<div class="t " style="left:216.1px;top:998.2px;font-size:11px;color:#ffffff;letter-spacing:-0.4px;-webkit-text-stroke:0.3px #fff">A3</div>
<svg style="left:194.2px;top:997.2px;" width="11" height="14" viewBox="0 0 11 14"><path d="M2.2 6.6 V3.6 a2.6 2.6 0 0 1 5.2 -0.4" fill="none" stroke="#b8b8b8" stroke-width="1.5"/><rect x="0.8" y="6" width="9.8" height="7.4" rx="0.8" fill="#b8b8b8"/><path d="M5 8.2h1.4v3H5z" fill="#1d1d1d"/></svg>
<svg style="left:240.6px;top:1000.4000000000001px;" width="13" height="9.6" viewBox="0 0 13 9.6"><path d="M0.6 0.6H7.6V3.4H0.6z M0.6 6.2H7.6V9H0.6z" fill="none" stroke="#b8b8b8" stroke-width="1.2"/><path d="M7.6 1.3H11.8V8.3H7.6" fill="none" stroke="#b8b8b8" stroke-width="1.5"/></svg>
<div class="t " style="left:266.5px;top:997.2px;font-size:10px;color:#b0b0b0;">M</div>
<div class="t " style="left:291.6px;top:997.2px;font-size:10px;color:#b0b0b0;">S</div>
<svg style="left:313.6px;top:997.3px;" width="10" height="15" viewBox="0 0 10 15"><rect x="2.6" y="0.3" width="4.8" height="9.2" rx="2.4" fill="#b8b8b8"/><path d="M0.7 6.2 V7.4 a4.3 4.3 0 0 0 8.6 0 V6.2" fill="none" stroke="#b8b8b8" stroke-width="1.1"/><path d="M5 11.8v2.4M2.4 14.3h5.2" stroke="#b8b8b8" stroke-width="1.1"/></svg>
<div class="a" style="left:151px;top:1026px;width:203px;height:20px;overflow:hidden">
<svg style="left:43.2px;top:12px" width="11" height="14" viewBox="0 0 11 14"><path d="M2.2 6.6 V3.6 a2.6 2.6 0 0 1 5.2 -0.4" fill="none" stroke="#b8b8b8" stroke-width="1.5"/><rect x="0.8" y="6" width="9.8" height="7.4" fill="#b8b8b8"/></svg>
<div class="t" style="left:124.5px;top:11px;font-size:11px;color:#4a9bef">0.0</div>
<svg style="left:186.5px;top:15px" width="13" height="10" viewBox="0 0 13 10"><path d="M0 0L6.5 5L13 0V10L6.5 5L0 10z" fill="#b8b8b8"/></svg>
<svg style="left:66px;top:15px" width="10" height="8" viewBox="0 0 10 8"><path d="M1 1.5h6M3 4.5h6" stroke="#b8b8b8" stroke-width="1.3"/></svg>
</div>
<div class="a" style="left:161.5px;top:1046.4px;width:1634.5px;height:12.3px;background:#313131;border-radius:6px 0 0 6px"></div>
<div class="a" style="left:161.5px;top:1046.4px;width:260.5px;height:12.3px;background:#494949;border-radius:6px"></div>
<div class="a" style="left:161.5px;top:1046.2px;width:12.6px;height:12.6px;border-radius:6.3px;border:2px solid #c6c6c6;background:#101010"></div>
<div class="a" style="left:409.7px;top:1046.2px;width:12.6px;height:12.6px;border-radius:6.3px;border:2px solid #c6c6c6;background:#101010"></div>
<div class="a" style="left:1791px;top:761px;width:12px;height:137px;background:#494949;"></div>
<div class="a" style="left:1791px;top:903px;width:12px;height:133px;background:#494949;"></div>
<div class="a" style="left:1791px;top:1036px;width:12px;height:6px;background:#313131;"></div>
<div class="a" style="left:1790.7px;top:765.7px;width:12.6px;height:12.6px;border-radius:6.3px;border:2px solid #c6c6c6;background:#101010"></div>
<div class="a" style="left:1790.7px;top:882.7px;width:12.6px;height:12.6px;border-radius:6.3px;border:2px solid #c6c6c6;background:#101010"></div>
<div class="a" style="left:1790.7px;top:906.5px;width:12.6px;height:12.6px;border-radius:6.3px;border:2px solid #c6c6c6;background:#101010"></div>
<div class="a" style="left:1790.7px;top:1023.4000000000001px;width:12.6px;height:12.6px;border-radius:6.3px;border:2px solid #c6c6c6;background:#101010"></div>
</div></div></body></html>
